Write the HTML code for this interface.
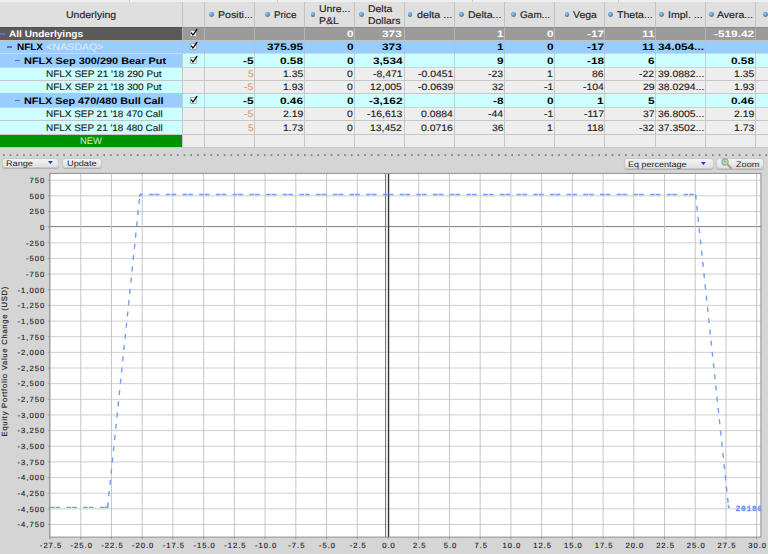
<!DOCTYPE html><html><head><meta charset="utf-8"><style>
*{margin:0;padding:0;box-sizing:border-box}
html,body{width:768px;height:554px;overflow:hidden;background:#d5d5d5;font-family:'Liberation Sans', sans-serif;text-rendering:geometricPrecision}
.a{position:absolute}
</style></head><body>
<div class="a" style="left:0;top:0;width:768px;height:2px;background:#efefef"></div>
<div class="a" style="left:0;top:2px;width:768px;height:25px;background:#dfdfdf"></div>
<div class="a" style="left:129.1px;top:0;width:0.8px;height:2px;background:#c8c8c8"></div>
<div class="a" style="left:277.1px;top:0;width:0.8px;height:2px;background:#c8c8c8"></div>
<div class="a" style="left:471.6px;top:0;width:0.8px;height:2px;background:#c8c8c8"></div>
<div class="a" style="left:618.1px;top:0;width:0.8px;height:2px;background:#c8c8c8"></div>
<div class="a" style="left:182.00px;top:2px;width:1px;height:25px;background:#c2c2c2"></div>
<div class="a" style="left:204.00px;top:2px;width:1px;height:25px;background:#c2c2c2"></div>
<div class="a" style="left:254.10px;top:2px;width:1px;height:25px;background:#c2c2c2"></div>
<div class="a" style="left:304.10px;top:2px;width:1px;height:25px;background:#c2c2c2"></div>
<div class="a" style="left:353.90px;top:2px;width:1px;height:25px;background:#c2c2c2"></div>
<div class="a" style="left:404.00px;top:2px;width:1px;height:25px;background:#c2c2c2"></div>
<div class="a" style="left:454.00px;top:2px;width:1px;height:25px;background:#c2c2c2"></div>
<div class="a" style="left:504.00px;top:2px;width:1px;height:25px;background:#c2c2c2"></div>
<div class="a" style="left:554.10px;top:2px;width:1px;height:25px;background:#c2c2c2"></div>
<div class="a" style="left:604.00px;top:2px;width:1px;height:25px;background:#c2c2c2"></div>
<div class="a" style="left:654.90px;top:2px;width:1px;height:25px;background:#c2c2c2"></div>
<div class="a" style="left:704.90px;top:2px;width:1px;height:25px;background:#c2c2c2"></div>
<div class="a" style="left:754.90px;top:2px;width:1px;height:25px;background:#c2c2c2"></div>
<div class="a" style="left:804.90px;top:2px;width:1px;height:25px;background:#c2c2c2"></div>
<div style="position:absolute;top:10.00px;white-space:pre;font-family:'Liberation Sans', sans-serif;font-size:9.7px;line-height:11.64px;color:#222;-webkit-text-stroke:0.15px #222;left:66.20px;width:48.31px;transform-origin:0 0;transform:scaleX(1.0839);">Underlying</div>
<div class="a" style="left:209.30px;top:11.90px;width:4.8px;height:4.8px;border-radius:50%;background:radial-gradient(circle at 40% 35%,#9ccaf0,#2f6db0 80%)"></div>
<div style="position:absolute;top:10.00px;white-space:pre;font-family:'Liberation Sans', sans-serif;font-size:9.7px;line-height:11.64px;color:#222;-webkit-text-stroke:0.15px #222;left:217.60px;width:33.77px;transform-origin:0 0;transform:scaleX(1.0955);">Positi...</div>
<div class="a" style="left:265.10px;top:11.90px;width:4.8px;height:4.8px;border-radius:50%;background:radial-gradient(circle at 40% 35%,#9ccaf0,#2f6db0 80%)"></div>
<div style="position:absolute;top:10.00px;white-space:pre;font-family:'Liberation Sans', sans-serif;font-size:9.7px;line-height:11.64px;color:#222;-webkit-text-stroke:0.15px #222;left:273.80px;width:24.08px;transform-origin:0 0;transform:scaleX(1.0191);">Price</div>
<div class="a" style="left:310.60px;top:11.90px;width:4.8px;height:4.8px;border-radius:50%;background:radial-gradient(circle at 40% 35%,#9ccaf0,#2f6db0 80%)"></div>
<div style="position:absolute;top:4.00px;white-space:pre;font-family:'Liberation Sans', sans-serif;font-size:9.7px;line-height:11.64px;color:#222;-webkit-text-stroke:0.15px #222;left:319.00px;width:31.08px;transform-origin:0 0;transform:scaleX(1.0798);">Unre...</div>
<div style="position:absolute;top:16.00px;white-space:pre;font-family:'Liberation Sans', sans-serif;font-size:9.7px;line-height:11.64px;color:#222;-webkit-text-stroke:0.15px #222;left:319.00px;width:20.31px;transform-origin:0 0;transform:scaleX(1.0800);">P&amp;L</div>
<div class="a" style="left:359.30px;top:11.90px;width:4.8px;height:4.8px;border-radius:50%;background:radial-gradient(circle at 40% 35%,#9ccaf0,#2f6db0 80%)"></div>
<div style="position:absolute;top:4.00px;white-space:pre;font-family:'Liberation Sans', sans-serif;font-size:9.7px;line-height:11.64px;color:#222;-webkit-text-stroke:0.15px #222;left:368.20px;width:24.62px;transform-origin:0 0;transform:scaleX(1.0800);">Delta</div>
<div style="position:absolute;top:16.00px;white-space:pre;font-family:'Liberation Sans', sans-serif;font-size:9.7px;line-height:11.64px;color:#222;-webkit-text-stroke:0.15px #222;left:368.20px;width:32.16px;transform-origin:0 0;transform:scaleX(1.0800);">Dollars</div>
<div class="a" style="left:407.60px;top:11.90px;width:4.8px;height:4.8px;border-radius:50%;background:radial-gradient(circle at 40% 35%,#9ccaf0,#2f6db0 80%)"></div>
<div style="position:absolute;top:10.00px;white-space:pre;font-family:'Liberation Sans', sans-serif;font-size:9.7px;line-height:11.64px;color:#222;-webkit-text-stroke:0.15px #222;left:417.00px;width:33.78px;transform-origin:0 0;transform:scaleX(1.1107);">delta ...</div>
<div class="a" style="left:458.90px;top:11.90px;width:4.8px;height:4.8px;border-radius:50%;background:radial-gradient(circle at 40% 35%,#9ccaf0,#2f6db0 80%)"></div>
<div style="position:absolute;top:10.00px;white-space:pre;font-family:'Liberation Sans', sans-serif;font-size:9.7px;line-height:11.64px;color:#222;-webkit-text-stroke:0.15px #222;left:467.50px;width:32.70px;transform-origin:0 0;transform:scaleX(1.0878);">Delta...</div>
<div class="a" style="left:511.10px;top:11.90px;width:4.8px;height:4.8px;border-radius:50%;background:radial-gradient(circle at 40% 35%,#9ccaf0,#2f6db0 80%)"></div>
<div style="position:absolute;top:10.00px;white-space:pre;font-family:'Liberation Sans', sans-serif;font-size:9.7px;line-height:11.64px;color:#222;-webkit-text-stroke:0.15px #222;left:519.80px;width:31.08px;transform-origin:0 0;transform:scaleX(1.0351);">Gam...</div>
<div class="a" style="left:564.60px;top:11.90px;width:4.8px;height:4.8px;border-radius:50%;background:radial-gradient(circle at 40% 35%,#9ccaf0,#2f6db0 80%)"></div>
<div style="position:absolute;top:10.00px;white-space:pre;font-family:'Liberation Sans', sans-serif;font-size:9.7px;line-height:11.64px;color:#222;-webkit-text-stroke:0.15px #222;left:573.20px;width:24.09px;transform-origin:0 0;transform:scaleX(1.0818);">Vega</div>
<div class="a" style="left:608.30px;top:11.90px;width:4.8px;height:4.8px;border-radius:50%;background:radial-gradient(circle at 40% 35%,#9ccaf0,#2f6db0 80%)"></div>
<div style="position:absolute;top:10.00px;white-space:pre;font-family:'Liberation Sans', sans-serif;font-size:9.7px;line-height:11.64px;color:#222;-webkit-text-stroke:0.15px #222;left:616.80px;width:34.86px;transform-origin:0 0;transform:scaleX(1.0895);">Theta...</div>
<div class="a" style="left:658.80px;top:11.90px;width:4.8px;height:4.8px;border-radius:50%;background:radial-gradient(circle at 40% 35%,#9ccaf0,#2f6db0 80%)"></div>
<div style="position:absolute;top:10.00px;white-space:pre;font-family:'Liberation Sans', sans-serif;font-size:9.7px;line-height:11.64px;color:#222;-webkit-text-stroke:0.15px #222;left:668.00px;width:33.77px;transform-origin:0 0;transform:scaleX(1.0892);">Impl. ...</div>
<div class="a" style="left:708.80px;top:11.90px;width:4.8px;height:4.8px;border-radius:50%;background:radial-gradient(circle at 40% 35%,#9ccaf0,#2f6db0 80%)"></div>
<div style="position:absolute;top:10.00px;white-space:pre;font-family:'Liberation Sans', sans-serif;font-size:9.7px;line-height:11.64px;color:#222;-webkit-text-stroke:0.15px #222;left:717.40px;width:35.22px;transform-origin:0 0;transform:scaleX(1.0837);">Avera...</div>
<div class="a" style="left:763.30px;top:11.90px;width:4.8px;height:4.8px;border-radius:50%;background:radial-gradient(circle at 40% 35%,#9ccaf0,#2f6db0 80%)"></div>
<div class="a" style="left:0;top:27.000px;width:182.5px;height:13.360px;background:#5a5a5a"></div>
<div class="a" style="left:182.5px;top:27.000px;width:585.5px;height:13.360px;background:#9b9b9b"></div>
<div class="a" style="left:0;top:40.360px;width:182.5px;height:13.360px;background:#99ccff"></div>
<div class="a" style="left:182.5px;top:40.360px;width:585.5px;height:13.360px;background:#99ccff"></div>
<div class="a" style="left:0;top:53.720px;width:182.5px;height:13.360px;background:#99ccff"></div>
<div class="a" style="left:182.5px;top:53.720px;width:585.5px;height:13.360px;background:#ccffff"></div>
<div class="a" style="left:0;top:67.080px;width:182.5px;height:13.360px;background:#ccffff"></div>
<div class="a" style="left:182.5px;top:67.080px;width:585.5px;height:13.360px;background:#eeeeee"></div>
<div class="a" style="left:0;top:80.440px;width:182.5px;height:13.360px;background:#ccffff"></div>
<div class="a" style="left:182.5px;top:80.440px;width:585.5px;height:13.360px;background:#eeeeee"></div>
<div class="a" style="left:0;top:93.800px;width:182.5px;height:13.360px;background:#99ccff"></div>
<div class="a" style="left:182.5px;top:93.800px;width:585.5px;height:13.360px;background:#ccffff"></div>
<div class="a" style="left:0;top:107.160px;width:182.5px;height:13.360px;background:#ccffff"></div>
<div class="a" style="left:182.5px;top:107.160px;width:585.5px;height:13.360px;background:#eeeeee"></div>
<div class="a" style="left:0;top:120.520px;width:182.5px;height:13.360px;background:#ccffff"></div>
<div class="a" style="left:182.5px;top:120.520px;width:585.5px;height:13.360px;background:#eeeeee"></div>
<div class="a" style="left:0;top:133.880px;width:182.5px;height:13.360px;background:#009300"></div>
<div class="a" style="left:182.5px;top:133.880px;width:585.5px;height:13.360px;background:#eeeeee"></div>
<div class="a" style="left:0;top:40.010px;width:768px;height:1px;background:#c4c4c4"></div>
<div class="a" style="left:182.00px;top:27.000px;width:1px;height:13.360px;background:#b4b4b4"></div>
<div class="a" style="left:204.00px;top:27.000px;width:1px;height:13.360px;background:#b4b4b4"></div>
<div class="a" style="left:254.10px;top:27.000px;width:1px;height:13.360px;background:#b4b4b4"></div>
<div class="a" style="left:304.10px;top:27.000px;width:1px;height:13.360px;background:#b4b4b4"></div>
<div class="a" style="left:353.90px;top:27.000px;width:1px;height:13.360px;background:#b4b4b4"></div>
<div class="a" style="left:404.00px;top:27.000px;width:1px;height:13.360px;background:#b4b4b4"></div>
<div class="a" style="left:454.00px;top:27.000px;width:1px;height:13.360px;background:#b4b4b4"></div>
<div class="a" style="left:504.00px;top:27.000px;width:1px;height:13.360px;background:#b4b4b4"></div>
<div class="a" style="left:554.10px;top:27.000px;width:1px;height:13.360px;background:#b4b4b4"></div>
<div class="a" style="left:604.00px;top:27.000px;width:1px;height:13.360px;background:#b4b4b4"></div>
<div class="a" style="left:654.90px;top:27.000px;width:1px;height:13.360px;background:#b4b4b4"></div>
<div class="a" style="left:704.90px;top:27.000px;width:1px;height:13.360px;background:#b4b4b4"></div>
<div class="a" style="left:754.90px;top:27.000px;width:1px;height:13.360px;background:#b4b4b4"></div>
<div class="a" style="left:804.90px;top:27.000px;width:1px;height:13.360px;background:#b4b4b4"></div>
<div class="a" style="left:0;top:27.000px;width:768px;height:0.9px;background:rgba(0,0,0,0.1)"></div>
<div class="a" style="left:0px;top:33.050px;width:5.4px;height:1.6px;background:#6868d4"></div>
<div style="position:absolute;top:29.00px;white-space:pre;font-family:'Liberation Sans', sans-serif;font-size:9.3px;line-height:11.16px;color:#ffffff;font-weight:bold;left:9.00px;width:70.20px;transform-origin:0 0;transform:scaleX(1.0865);">All Underlyings</div>
<svg class="a" style="left:185px;top:27.000px" width="16" height="13" viewBox="0 0 16 13"><rect x="5.25" y="3.75" width="5.9" height="5.7" fill="#fff" stroke="#8c8c8c" stroke-width="0.7"/><path d="M6.4 5.9 L8.0 8.1 L11.9 2.3" fill="none" stroke="#000" stroke-width="1.25" stroke-linecap="round" stroke-linejoin="round"/></svg>
<div style="position:absolute;top:29.00px;white-space:pre;font-family:'Liberation Sans', sans-serif;font-size:9.3px;line-height:11.16px;color:#ffffff;font-weight:bold;left:346.53px;width:7.17px;transform-origin:0 0;transform:scaleX(1.2700);">0</div>
<div style="position:absolute;top:29.00px;white-space:pre;font-family:'Liberation Sans', sans-serif;font-size:9.3px;line-height:11.16px;color:#ffffff;font-weight:bold;left:382.40px;width:17.52px;transform-origin:0 0;transform:scaleX(1.2700);">373</div>
<div style="position:absolute;top:29.00px;white-space:pre;font-family:'Liberation Sans', sans-serif;font-size:9.3px;line-height:11.16px;color:#ffffff;font-weight:bold;left:496.83px;width:7.17px;transform-origin:0 0;transform:scaleX(1.2700);">1</div>
<div style="position:absolute;top:29.00px;white-space:pre;font-family:'Liberation Sans', sans-serif;font-size:9.3px;line-height:11.16px;color:#ffffff;font-weight:bold;left:546.53px;width:7.17px;transform-origin:0 0;transform:scaleX(1.2700);">0</div>
<div style="position:absolute;top:29.00px;white-space:pre;font-family:'Liberation Sans', sans-serif;font-size:9.3px;line-height:11.16px;color:#ffffff;font-weight:bold;left:586.53px;width:15.44px;transform-origin:0 0;transform:scaleX(1.2700);">-17</div>
<div style="position:absolute;top:29.00px;white-space:pre;font-family:'Liberation Sans', sans-serif;font-size:9.3px;line-height:11.16px;color:#ffffff;font-weight:bold;left:641.62px;width:11.83px;transform-origin:0 0;transform:scaleX(1.2700);">11</div>
<div style="position:absolute;top:29.00px;white-space:pre;font-family:'Liberation Sans', sans-serif;font-size:9.3px;line-height:11.16px;color:#ffffff;font-weight:bold;left:714.24px;width:33.55px;transform-origin:0 0;transform:scaleX(1.2700);">-519.42</div>
<div class="a" style="left:0;top:53.370px;width:768px;height:1px;background:#c4dcf0"></div>
<div class="a" style="left:182.00px;top:40.360px;width:1px;height:13.360px;background:#a8c4e0"></div>
<div class="a" style="left:204.00px;top:40.360px;width:1px;height:13.360px;background:#a8c4e0"></div>
<div class="a" style="left:254.10px;top:40.360px;width:1px;height:13.360px;background:#a8c4e0"></div>
<div class="a" style="left:304.10px;top:40.360px;width:1px;height:13.360px;background:#a8c4e0"></div>
<div class="a" style="left:353.90px;top:40.360px;width:1px;height:13.360px;background:#a8c4e0"></div>
<div class="a" style="left:404.00px;top:40.360px;width:1px;height:13.360px;background:#a8c4e0"></div>
<div class="a" style="left:454.00px;top:40.360px;width:1px;height:13.360px;background:#a8c4e0"></div>
<div class="a" style="left:504.00px;top:40.360px;width:1px;height:13.360px;background:#a8c4e0"></div>
<div class="a" style="left:554.10px;top:40.360px;width:1px;height:13.360px;background:#a8c4e0"></div>
<div class="a" style="left:604.00px;top:40.360px;width:1px;height:13.360px;background:#a8c4e0"></div>
<div class="a" style="left:654.90px;top:40.360px;width:1px;height:13.360px;background:#a8c4e0"></div>
<div class="a" style="left:704.90px;top:40.360px;width:1px;height:13.360px;background:#a8c4e0"></div>
<div class="a" style="left:754.90px;top:40.360px;width:1px;height:13.360px;background:#a8c4e0"></div>
<div class="a" style="left:804.90px;top:40.360px;width:1px;height:13.360px;background:#a8c4e0"></div>
<div class="a" style="left:7px;top:46.410px;width:5.4px;height:1.6px;background:#6868d4"></div>
<div style="position:absolute;top:42.00px;white-space:pre;font-family:'Liberation Sans', sans-serif;font-size:9.3px;line-height:11.16px;color:#000;font-weight:bold;left:16.80px;width:26.28px;transform-origin:0 0;transform:scaleX(1.0708);">NFLX</div>
<div style="position:absolute;top:42.00px;white-space:pre;font-family:'Liberation Sans', sans-serif;font-size:9.3px;line-height:11.16px;color:#dce8f6;-webkit-text-stroke:0.15px #dce8f6;left:46.10px;width:52.12px;transform-origin:0 0;transform:scaleX(1.1471);">&lt;NASDAQ&gt;</div>
<svg class="a" style="left:185px;top:40.360px" width="16" height="13" viewBox="0 0 16 13"><rect x="5.25" y="3.75" width="5.9" height="5.7" fill="#fff" stroke="#8c8c8c" stroke-width="0.7"/><path d="M6.4 5.9 L8.0 8.1 L11.9 2.3" fill="none" stroke="#000" stroke-width="1.25" stroke-linecap="round" stroke-linejoin="round"/></svg>
<div style="position:absolute;top:42.00px;white-space:pre;font-family:'Liberation Sans', sans-serif;font-size:9.3px;line-height:11.16px;color:#000;font-weight:bold;left:266.78px;width:30.44px;transform-origin:0 0;transform:scaleX(1.2700);">375.95</div>
<div style="position:absolute;top:42.00px;white-space:pre;font-family:'Liberation Sans', sans-serif;font-size:9.3px;line-height:11.16px;color:#000;font-weight:bold;left:346.53px;width:7.17px;transform-origin:0 0;transform:scaleX(1.2700);">0</div>
<div style="position:absolute;top:42.00px;white-space:pre;font-family:'Liberation Sans', sans-serif;font-size:9.3px;line-height:11.16px;color:#000;font-weight:bold;left:382.40px;width:17.52px;transform-origin:0 0;transform:scaleX(1.2700);">373</div>
<div style="position:absolute;top:42.00px;white-space:pre;font-family:'Liberation Sans', sans-serif;font-size:9.3px;line-height:11.16px;color:#000;font-weight:bold;left:496.83px;width:7.17px;transform-origin:0 0;transform:scaleX(1.2700);">1</div>
<div style="position:absolute;top:42.00px;white-space:pre;font-family:'Liberation Sans', sans-serif;font-size:9.3px;line-height:11.16px;color:#000;font-weight:bold;left:546.53px;width:7.17px;transform-origin:0 0;transform:scaleX(1.2700);">0</div>
<div style="position:absolute;top:42.00px;white-space:pre;font-family:'Liberation Sans', sans-serif;font-size:9.3px;line-height:11.16px;color:#000;font-weight:bold;left:586.53px;width:15.44px;transform-origin:0 0;transform:scaleX(1.2700);">-17</div>
<div style="position:absolute;top:42.00px;white-space:pre;font-family:'Liberation Sans', sans-serif;font-size:9.3px;line-height:11.16px;color:#000;font-weight:bold;left:641.62px;width:11.83px;transform-origin:0 0;transform:scaleX(1.2700);">11</div>
<div style="position:absolute;top:42.00px;white-space:pre;font-family:'Liberation Sans', sans-serif;font-size:9.3px;line-height:11.16px;color:#000;font-weight:bold;left:658.14px;width:38.19px;transform-origin:0 0;transform:scaleX(1.2700);">34.054...</div>
<div class="a" style="left:0;top:66.730px;width:768px;height:1px;background:#c4d8d8"></div>
<div class="a" style="left:182.00px;top:53.720px;width:1px;height:13.360px;background:#bcd4d4"></div>
<div class="a" style="left:204.00px;top:53.720px;width:1px;height:13.360px;background:#bcd4d4"></div>
<div class="a" style="left:254.10px;top:53.720px;width:1px;height:13.360px;background:#bcd4d4"></div>
<div class="a" style="left:304.10px;top:53.720px;width:1px;height:13.360px;background:#bcd4d4"></div>
<div class="a" style="left:353.90px;top:53.720px;width:1px;height:13.360px;background:#bcd4d4"></div>
<div class="a" style="left:404.00px;top:53.720px;width:1px;height:13.360px;background:#bcd4d4"></div>
<div class="a" style="left:454.00px;top:53.720px;width:1px;height:13.360px;background:#bcd4d4"></div>
<div class="a" style="left:504.00px;top:53.720px;width:1px;height:13.360px;background:#bcd4d4"></div>
<div class="a" style="left:554.10px;top:53.720px;width:1px;height:13.360px;background:#bcd4d4"></div>
<div class="a" style="left:604.00px;top:53.720px;width:1px;height:13.360px;background:#bcd4d4"></div>
<div class="a" style="left:654.90px;top:53.720px;width:1px;height:13.360px;background:#bcd4d4"></div>
<div class="a" style="left:704.90px;top:53.720px;width:1px;height:13.360px;background:#bcd4d4"></div>
<div class="a" style="left:754.90px;top:53.720px;width:1px;height:13.360px;background:#bcd4d4"></div>
<div class="a" style="left:804.90px;top:53.720px;width:1px;height:13.360px;background:#bcd4d4"></div>
<div class="a" style="left:15px;top:59.770px;width:5.4px;height:1.6px;background:#6868d4"></div>
<div style="position:absolute;top:56.00px;white-space:pre;font-family:'Liberation Sans', sans-serif;font-size:9.3px;line-height:11.16px;color:#000;font-weight:bold;left:24.10px;width:122.92px;transform-origin:0 0;transform:scaleX(1.1751);">NFLX Sep 300/290 Bear Put</div>
<svg class="a" style="left:185px;top:53.720px" width="16" height="13" viewBox="0 0 16 13"><rect x="5.25" y="3.75" width="5.9" height="5.7" fill="#fff" stroke="#8c8c8c" stroke-width="0.7"/><path d="M6.4 5.9 L8.0 8.1 L11.9 2.3" fill="none" stroke="#000" stroke-width="1.25" stroke-linecap="round" stroke-linejoin="round"/></svg>
<div style="position:absolute;top:56.00px;white-space:pre;font-family:'Liberation Sans', sans-serif;font-size:9.3px;line-height:11.16px;color:#000;font-weight:bold;left:242.88px;width:10.28px;transform-origin:0 0;transform:scaleX(1.2700);">-5</div>
<div style="position:absolute;top:56.00px;white-space:pre;font-family:'Liberation Sans', sans-serif;font-size:9.3px;line-height:11.16px;color:#000;font-weight:bold;left:279.90px;width:20.11px;transform-origin:0 0;transform:scaleX(1.2700);">0.58</div>
<div style="position:absolute;top:56.00px;white-space:pre;font-family:'Liberation Sans', sans-serif;font-size:9.3px;line-height:11.16px;color:#000;font-weight:bold;left:346.53px;width:7.17px;transform-origin:0 0;transform:scaleX(1.2700);">0</div>
<div style="position:absolute;top:56.00px;white-space:pre;font-family:'Liberation Sans', sans-serif;font-size:9.3px;line-height:11.16px;color:#000;font-weight:bold;left:372.55px;width:25.27px;transform-origin:0 0;transform:scaleX(1.2700);">3,534</div>
<div style="position:absolute;top:56.00px;white-space:pre;font-family:'Liberation Sans', sans-serif;font-size:9.3px;line-height:11.16px;color:#000;font-weight:bold;left:496.83px;width:7.17px;transform-origin:0 0;transform:scaleX(1.2700);">9</div>
<div style="position:absolute;top:56.00px;white-space:pre;font-family:'Liberation Sans', sans-serif;font-size:9.3px;line-height:11.16px;color:#000;font-weight:bold;left:546.53px;width:7.17px;transform-origin:0 0;transform:scaleX(1.2700);">0</div>
<div style="position:absolute;top:56.00px;white-space:pre;font-family:'Liberation Sans', sans-serif;font-size:9.3px;line-height:11.16px;color:#000;font-weight:bold;left:586.53px;width:15.44px;transform-origin:0 0;transform:scaleX(1.2700);">-18</div>
<div style="position:absolute;top:56.00px;white-space:pre;font-family:'Liberation Sans', sans-serif;font-size:9.3px;line-height:11.16px;color:#000;font-weight:bold;left:647.53px;width:7.17px;transform-origin:0 0;transform:scaleX(1.2700);">6</div>
<div style="position:absolute;top:56.00px;white-space:pre;font-family:'Liberation Sans', sans-serif;font-size:9.3px;line-height:11.16px;color:#000;font-weight:bold;left:731.30px;width:20.11px;transform-origin:0 0;transform:scaleX(1.2700);">0.58</div>
<div class="a" style="left:0;top:80.090px;width:768px;height:1px;background:#c6c6c6"></div>
<div class="a" style="left:182.00px;top:67.080px;width:1px;height:13.360px;background:#c6c6c6"></div>
<div class="a" style="left:204.00px;top:67.080px;width:1px;height:13.360px;background:#c6c6c6"></div>
<div class="a" style="left:254.10px;top:67.080px;width:1px;height:13.360px;background:#c6c6c6"></div>
<div class="a" style="left:304.10px;top:67.080px;width:1px;height:13.360px;background:#c6c6c6"></div>
<div class="a" style="left:353.90px;top:67.080px;width:1px;height:13.360px;background:#c6c6c6"></div>
<div class="a" style="left:404.00px;top:67.080px;width:1px;height:13.360px;background:#c6c6c6"></div>
<div class="a" style="left:454.00px;top:67.080px;width:1px;height:13.360px;background:#c6c6c6"></div>
<div class="a" style="left:504.00px;top:67.080px;width:1px;height:13.360px;background:#c6c6c6"></div>
<div class="a" style="left:554.10px;top:67.080px;width:1px;height:13.360px;background:#c6c6c6"></div>
<div class="a" style="left:604.00px;top:67.080px;width:1px;height:13.360px;background:#c6c6c6"></div>
<div class="a" style="left:654.90px;top:67.080px;width:1px;height:13.360px;background:#c6c6c6"></div>
<div class="a" style="left:704.90px;top:67.080px;width:1px;height:13.360px;background:#c6c6c6"></div>
<div class="a" style="left:754.90px;top:67.080px;width:1px;height:13.360px;background:#c6c6c6"></div>
<div class="a" style="left:804.90px;top:67.080px;width:1px;height:13.360px;background:#c6c6c6"></div>
<div style="position:absolute;top:69.00px;white-space:pre;font-family:'Liberation Sans', sans-serif;font-size:9.3px;line-height:11.16px;color:#1e1e1e;-webkit-text-stroke:0.15px #1e1e1e;left:46.20px;width:109.05px;transform-origin:0 0;transform:scaleX(1.0790);">NFLX SEP 21 &#x27;18 290 Put</div>
<div style="position:absolute;top:69.00px;white-space:pre;font-family:'Liberation Sans', sans-serif;font-size:9.3px;line-height:11.16px;color:#e59a68;-webkit-text-stroke:0.15px #e59a68;left:247.61px;width:7.17px;transform-origin:0 0;transform:scaleX(1.1200);">5</div>
<div style="position:absolute;top:69.00px;white-space:pre;font-family:'Liberation Sans', sans-serif;font-size:9.3px;line-height:11.16px;color:#1e1e1e;-webkit-text-stroke:0.15px #1e1e1e;left:282.62px;width:20.11px;transform-origin:0 0;transform:scaleX(1.1200);">1.35</div>
<div style="position:absolute;top:69.00px;white-space:pre;font-family:'Liberation Sans', sans-serif;font-size:9.3px;line-height:11.16px;color:#1e1e1e;-webkit-text-stroke:0.15px #1e1e1e;left:347.31px;width:7.17px;transform-origin:0 0;transform:scaleX(1.1200);">0</div>
<div style="position:absolute;top:69.00px;white-space:pre;font-family:'Liberation Sans', sans-serif;font-size:9.3px;line-height:11.16px;color:#1e1e1e;-webkit-text-stroke:0.15px #1e1e1e;left:372.56px;width:28.38px;transform-origin:0 0;transform:scaleX(1.1200);">-8,471</div>
<div style="position:absolute;top:69.00px;white-space:pre;font-family:'Liberation Sans', sans-serif;font-size:9.3px;line-height:11.16px;color:#1e1e1e;-webkit-text-stroke:0.15px #1e1e1e;left:417.77px;width:33.55px;transform-origin:0 0;transform:scaleX(1.1200);">-0.0451</div>
<div style="position:absolute;top:69.00px;white-space:pre;font-family:'Liberation Sans', sans-serif;font-size:9.3px;line-height:11.16px;color:#1e1e1e;-webkit-text-stroke:0.15px #1e1e1e;left:488.35px;width:15.44px;transform-origin:0 0;transform:scaleX(1.1200);">-23</div>
<div style="position:absolute;top:69.00px;white-space:pre;font-family:'Liberation Sans', sans-serif;font-size:9.3px;line-height:11.16px;color:#1e1e1e;-webkit-text-stroke:0.15px #1e1e1e;left:547.31px;width:7.17px;transform-origin:0 0;transform:scaleX(1.1200);">1</div>
<div style="position:absolute;top:69.00px;white-space:pre;font-family:'Liberation Sans', sans-serif;font-size:9.3px;line-height:11.16px;color:#1e1e1e;-webkit-text-stroke:0.15px #1e1e1e;left:592.01px;width:12.34px;transform-origin:0 0;transform:scaleX(1.1200);">86</div>
<div style="position:absolute;top:69.00px;white-space:pre;font-family:'Liberation Sans', sans-serif;font-size:9.3px;line-height:11.16px;color:#1e1e1e;-webkit-text-stroke:0.15px #1e1e1e;left:639.05px;width:15.44px;transform-origin:0 0;transform:scaleX(1.1200);">-22</div>
<div style="position:absolute;top:69.00px;white-space:pre;font-family:'Liberation Sans', sans-serif;font-size:9.3px;line-height:11.16px;color:#1e1e1e;-webkit-text-stroke:0.15px #1e1e1e;left:657.78px;width:43.36px;transform-origin:0 0;transform:scaleX(1.1200);">39.0882...</div>
<div style="position:absolute;top:69.00px;white-space:pre;font-family:'Liberation Sans', sans-serif;font-size:9.3px;line-height:11.16px;color:#1e1e1e;-webkit-text-stroke:0.15px #1e1e1e;left:734.02px;width:20.11px;transform-origin:0 0;transform:scaleX(1.1200);">1.35</div>
<div class="a" style="left:0;top:93.450px;width:768px;height:1px;background:#c6c6c6"></div>
<div class="a" style="left:182.00px;top:80.440px;width:1px;height:13.360px;background:#c6c6c6"></div>
<div class="a" style="left:204.00px;top:80.440px;width:1px;height:13.360px;background:#c6c6c6"></div>
<div class="a" style="left:254.10px;top:80.440px;width:1px;height:13.360px;background:#c6c6c6"></div>
<div class="a" style="left:304.10px;top:80.440px;width:1px;height:13.360px;background:#c6c6c6"></div>
<div class="a" style="left:353.90px;top:80.440px;width:1px;height:13.360px;background:#c6c6c6"></div>
<div class="a" style="left:404.00px;top:80.440px;width:1px;height:13.360px;background:#c6c6c6"></div>
<div class="a" style="left:454.00px;top:80.440px;width:1px;height:13.360px;background:#c6c6c6"></div>
<div class="a" style="left:504.00px;top:80.440px;width:1px;height:13.360px;background:#c6c6c6"></div>
<div class="a" style="left:554.10px;top:80.440px;width:1px;height:13.360px;background:#c6c6c6"></div>
<div class="a" style="left:604.00px;top:80.440px;width:1px;height:13.360px;background:#c6c6c6"></div>
<div class="a" style="left:654.90px;top:80.440px;width:1px;height:13.360px;background:#c6c6c6"></div>
<div class="a" style="left:704.90px;top:80.440px;width:1px;height:13.360px;background:#c6c6c6"></div>
<div class="a" style="left:754.90px;top:80.440px;width:1px;height:13.360px;background:#c6c6c6"></div>
<div class="a" style="left:804.90px;top:80.440px;width:1px;height:13.360px;background:#c6c6c6"></div>
<div style="position:absolute;top:82.00px;white-space:pre;font-family:'Liberation Sans', sans-serif;font-size:9.3px;line-height:11.16px;color:#1e1e1e;-webkit-text-stroke:0.15px #1e1e1e;left:46.20px;width:109.05px;transform-origin:0 0;transform:scaleX(1.0790);">NFLX SEP 21 &#x27;18 300 Put</div>
<div style="position:absolute;top:82.00px;white-space:pre;font-family:'Liberation Sans', sans-serif;font-size:9.3px;line-height:11.16px;color:#e59a68;-webkit-text-stroke:0.15px #e59a68;left:244.12px;width:10.28px;transform-origin:0 0;transform:scaleX(1.1200);">-5</div>
<div style="position:absolute;top:82.00px;white-space:pre;font-family:'Liberation Sans', sans-serif;font-size:9.3px;line-height:11.16px;color:#1e1e1e;-webkit-text-stroke:0.15px #1e1e1e;left:282.62px;width:20.11px;transform-origin:0 0;transform:scaleX(1.1200);">1.93</div>
<div style="position:absolute;top:82.00px;white-space:pre;font-family:'Liberation Sans', sans-serif;font-size:9.3px;line-height:11.16px;color:#1e1e1e;-webkit-text-stroke:0.15px #1e1e1e;left:347.31px;width:7.17px;transform-origin:0 0;transform:scaleX(1.1200);">0</div>
<div style="position:absolute;top:82.00px;white-space:pre;font-family:'Liberation Sans', sans-serif;font-size:9.3px;line-height:11.16px;color:#1e1e1e;-webkit-text-stroke:0.15px #1e1e1e;left:370.25px;width:30.44px;transform-origin:0 0;transform:scaleX(1.1200);">12,005</div>
<div style="position:absolute;top:82.00px;white-space:pre;font-family:'Liberation Sans', sans-serif;font-size:9.3px;line-height:11.16px;color:#1e1e1e;-webkit-text-stroke:0.15px #1e1e1e;left:417.77px;width:33.55px;transform-origin:0 0;transform:scaleX(1.1200);">-0.0639</div>
<div style="position:absolute;top:82.00px;white-space:pre;font-family:'Liberation Sans', sans-serif;font-size:9.3px;line-height:11.16px;color:#1e1e1e;-webkit-text-stroke:0.15px #1e1e1e;left:491.81px;width:12.34px;transform-origin:0 0;transform:scaleX(1.1200);">32</div>
<div style="position:absolute;top:82.00px;white-space:pre;font-family:'Liberation Sans', sans-serif;font-size:9.3px;line-height:11.16px;color:#1e1e1e;-webkit-text-stroke:0.15px #1e1e1e;left:543.83px;width:10.28px;transform-origin:0 0;transform:scaleX(1.1200);">-1</div>
<div style="position:absolute;top:82.00px;white-space:pre;font-family:'Liberation Sans', sans-serif;font-size:9.3px;line-height:11.16px;color:#1e1e1e;-webkit-text-stroke:0.15px #1e1e1e;left:582.76px;width:20.61px;transform-origin:0 0;transform:scaleX(1.1200);">-104</div>
<div style="position:absolute;top:82.00px;white-space:pre;font-family:'Liberation Sans', sans-serif;font-size:9.3px;line-height:11.16px;color:#1e1e1e;-webkit-text-stroke:0.15px #1e1e1e;left:642.51px;width:12.34px;transform-origin:0 0;transform:scaleX(1.1200);">29</div>
<div style="position:absolute;top:82.00px;white-space:pre;font-family:'Liberation Sans', sans-serif;font-size:9.3px;line-height:11.16px;color:#1e1e1e;-webkit-text-stroke:0.15px #1e1e1e;left:657.78px;width:43.36px;transform-origin:0 0;transform:scaleX(1.1200);">38.0294...</div>
<div style="position:absolute;top:82.00px;white-space:pre;font-family:'Liberation Sans', sans-serif;font-size:9.3px;line-height:11.16px;color:#1e1e1e;-webkit-text-stroke:0.15px #1e1e1e;left:734.02px;width:20.11px;transform-origin:0 0;transform:scaleX(1.1200);">1.93</div>
<div class="a" style="left:0;top:106.810px;width:768px;height:1px;background:#c4d8d8"></div>
<div class="a" style="left:182.00px;top:93.800px;width:1px;height:13.360px;background:#bcd4d4"></div>
<div class="a" style="left:204.00px;top:93.800px;width:1px;height:13.360px;background:#bcd4d4"></div>
<div class="a" style="left:254.10px;top:93.800px;width:1px;height:13.360px;background:#bcd4d4"></div>
<div class="a" style="left:304.10px;top:93.800px;width:1px;height:13.360px;background:#bcd4d4"></div>
<div class="a" style="left:353.90px;top:93.800px;width:1px;height:13.360px;background:#bcd4d4"></div>
<div class="a" style="left:404.00px;top:93.800px;width:1px;height:13.360px;background:#bcd4d4"></div>
<div class="a" style="left:454.00px;top:93.800px;width:1px;height:13.360px;background:#bcd4d4"></div>
<div class="a" style="left:504.00px;top:93.800px;width:1px;height:13.360px;background:#bcd4d4"></div>
<div class="a" style="left:554.10px;top:93.800px;width:1px;height:13.360px;background:#bcd4d4"></div>
<div class="a" style="left:604.00px;top:93.800px;width:1px;height:13.360px;background:#bcd4d4"></div>
<div class="a" style="left:654.90px;top:93.800px;width:1px;height:13.360px;background:#bcd4d4"></div>
<div class="a" style="left:704.90px;top:93.800px;width:1px;height:13.360px;background:#bcd4d4"></div>
<div class="a" style="left:754.90px;top:93.800px;width:1px;height:13.360px;background:#bcd4d4"></div>
<div class="a" style="left:804.90px;top:93.800px;width:1px;height:13.360px;background:#bcd4d4"></div>
<div class="a" style="left:15px;top:99.850px;width:5.4px;height:1.6px;background:#6868d4"></div>
<div style="position:absolute;top:96.00px;white-space:pre;font-family:'Liberation Sans', sans-serif;font-size:9.3px;line-height:11.16px;color:#000;font-weight:bold;left:24.10px;width:121.88px;transform-origin:0 0;transform:scaleX(1.1637);">NFLX Sep 470/480 Bull Call</div>
<svg class="a" style="left:185px;top:93.800px" width="16" height="13" viewBox="0 0 16 13"><rect x="5.25" y="3.75" width="5.9" height="5.7" fill="#fff" stroke="#8c8c8c" stroke-width="0.7"/><path d="M6.4 5.9 L8.0 8.1 L11.9 2.3" fill="none" stroke="#000" stroke-width="1.25" stroke-linecap="round" stroke-linejoin="round"/></svg>
<div style="position:absolute;top:96.00px;white-space:pre;font-family:'Liberation Sans', sans-serif;font-size:9.3px;line-height:11.16px;color:#000;font-weight:bold;left:242.88px;width:10.28px;transform-origin:0 0;transform:scaleX(1.2700);">-5</div>
<div style="position:absolute;top:96.00px;white-space:pre;font-family:'Liberation Sans', sans-serif;font-size:9.3px;line-height:11.16px;color:#000;font-weight:bold;left:279.90px;width:20.11px;transform-origin:0 0;transform:scaleX(1.2700);">0.46</div>
<div style="position:absolute;top:96.00px;white-space:pre;font-family:'Liberation Sans', sans-serif;font-size:9.3px;line-height:11.16px;color:#000;font-weight:bold;left:346.53px;width:7.17px;transform-origin:0 0;transform:scaleX(1.2700);">0</div>
<div style="position:absolute;top:96.00px;white-space:pre;font-family:'Liberation Sans', sans-serif;font-size:9.3px;line-height:11.16px;color:#000;font-weight:bold;left:368.60px;width:28.38px;transform-origin:0 0;transform:scaleX(1.2700);">-3,162</div>
<div style="position:absolute;top:96.00px;white-space:pre;font-family:'Liberation Sans', sans-serif;font-size:9.3px;line-height:11.16px;color:#000;font-weight:bold;left:492.88px;width:10.28px;transform-origin:0 0;transform:scaleX(1.2700);">-8</div>
<div style="position:absolute;top:96.00px;white-space:pre;font-family:'Liberation Sans', sans-serif;font-size:9.3px;line-height:11.16px;color:#000;font-weight:bold;left:546.53px;width:7.17px;transform-origin:0 0;transform:scaleX(1.2700);">0</div>
<div style="position:absolute;top:96.00px;white-space:pre;font-family:'Liberation Sans', sans-serif;font-size:9.3px;line-height:11.16px;color:#000;font-weight:bold;left:597.03px;width:7.17px;transform-origin:0 0;transform:scaleX(1.2700);">1</div>
<div style="position:absolute;top:96.00px;white-space:pre;font-family:'Liberation Sans', sans-serif;font-size:9.3px;line-height:11.16px;color:#000;font-weight:bold;left:647.53px;width:7.17px;transform-origin:0 0;transform:scaleX(1.2700);">5</div>
<div style="position:absolute;top:96.00px;white-space:pre;font-family:'Liberation Sans', sans-serif;font-size:9.3px;line-height:11.16px;color:#000;font-weight:bold;left:731.30px;width:20.11px;transform-origin:0 0;transform:scaleX(1.2700);">0.46</div>
<div class="a" style="left:0;top:120.170px;width:768px;height:1px;background:#c6c6c6"></div>
<div class="a" style="left:182.00px;top:107.160px;width:1px;height:13.360px;background:#c6c6c6"></div>
<div class="a" style="left:204.00px;top:107.160px;width:1px;height:13.360px;background:#c6c6c6"></div>
<div class="a" style="left:254.10px;top:107.160px;width:1px;height:13.360px;background:#c6c6c6"></div>
<div class="a" style="left:304.10px;top:107.160px;width:1px;height:13.360px;background:#c6c6c6"></div>
<div class="a" style="left:353.90px;top:107.160px;width:1px;height:13.360px;background:#c6c6c6"></div>
<div class="a" style="left:404.00px;top:107.160px;width:1px;height:13.360px;background:#c6c6c6"></div>
<div class="a" style="left:454.00px;top:107.160px;width:1px;height:13.360px;background:#c6c6c6"></div>
<div class="a" style="left:504.00px;top:107.160px;width:1px;height:13.360px;background:#c6c6c6"></div>
<div class="a" style="left:554.10px;top:107.160px;width:1px;height:13.360px;background:#c6c6c6"></div>
<div class="a" style="left:604.00px;top:107.160px;width:1px;height:13.360px;background:#c6c6c6"></div>
<div class="a" style="left:654.90px;top:107.160px;width:1px;height:13.360px;background:#c6c6c6"></div>
<div class="a" style="left:704.90px;top:107.160px;width:1px;height:13.360px;background:#c6c6c6"></div>
<div class="a" style="left:754.90px;top:107.160px;width:1px;height:13.360px;background:#c6c6c6"></div>
<div class="a" style="left:804.90px;top:107.160px;width:1px;height:13.360px;background:#c6c6c6"></div>
<div style="position:absolute;top:109.00px;white-space:pre;font-family:'Liberation Sans', sans-serif;font-size:9.3px;line-height:11.16px;color:#1e1e1e;-webkit-text-stroke:0.15px #1e1e1e;left:46.20px;width:111.11px;transform-origin:0 0;transform:scaleX(1.0687);">NFLX SEP 21 &#x27;18 470 Call</div>
<div style="position:absolute;top:109.00px;white-space:pre;font-family:'Liberation Sans', sans-serif;font-size:9.3px;line-height:11.16px;color:#e59a68;-webkit-text-stroke:0.15px #e59a68;left:244.12px;width:10.28px;transform-origin:0 0;transform:scaleX(1.1200);">-5</div>
<div style="position:absolute;top:109.00px;white-space:pre;font-family:'Liberation Sans', sans-serif;font-size:9.3px;line-height:11.16px;color:#1e1e1e;-webkit-text-stroke:0.15px #1e1e1e;left:282.62px;width:20.11px;transform-origin:0 0;transform:scaleX(1.1200);">2.19</div>
<div style="position:absolute;top:109.00px;white-space:pre;font-family:'Liberation Sans', sans-serif;font-size:9.3px;line-height:11.16px;color:#1e1e1e;-webkit-text-stroke:0.15px #1e1e1e;left:347.31px;width:7.17px;transform-origin:0 0;transform:scaleX(1.1200);">0</div>
<div style="position:absolute;top:109.00px;white-space:pre;font-family:'Liberation Sans', sans-serif;font-size:9.3px;line-height:11.16px;color:#1e1e1e;-webkit-text-stroke:0.15px #1e1e1e;left:366.77px;width:33.55px;transform-origin:0 0;transform:scaleX(1.1200);">-16,613</div>
<div style="position:absolute;top:109.00px;white-space:pre;font-family:'Liberation Sans', sans-serif;font-size:9.3px;line-height:11.16px;color:#1e1e1e;-webkit-text-stroke:0.15px #1e1e1e;left:421.25px;width:30.44px;transform-origin:0 0;transform:scaleX(1.1200);">0.0884</div>
<div style="position:absolute;top:109.00px;white-space:pre;font-family:'Liberation Sans', sans-serif;font-size:9.3px;line-height:11.16px;color:#1e1e1e;-webkit-text-stroke:0.15px #1e1e1e;left:488.35px;width:15.44px;transform-origin:0 0;transform:scaleX(1.1200);">-44</div>
<div style="position:absolute;top:109.00px;white-space:pre;font-family:'Liberation Sans', sans-serif;font-size:9.3px;line-height:11.16px;color:#1e1e1e;-webkit-text-stroke:0.15px #1e1e1e;left:543.83px;width:10.28px;transform-origin:0 0;transform:scaleX(1.1200);">-1</div>
<div style="position:absolute;top:109.00px;white-space:pre;font-family:'Liberation Sans', sans-serif;font-size:9.3px;line-height:11.16px;color:#1e1e1e;-webkit-text-stroke:0.15px #1e1e1e;left:583.53px;width:19.92px;transform-origin:0 0;transform:scaleX(1.1200);">-117</div>
<div style="position:absolute;top:109.00px;white-space:pre;font-family:'Liberation Sans', sans-serif;font-size:9.3px;line-height:11.16px;color:#1e1e1e;-webkit-text-stroke:0.15px #1e1e1e;left:642.51px;width:12.34px;transform-origin:0 0;transform:scaleX(1.1200);">37</div>
<div style="position:absolute;top:109.00px;white-space:pre;font-family:'Liberation Sans', sans-serif;font-size:9.3px;line-height:11.16px;color:#1e1e1e;-webkit-text-stroke:0.15px #1e1e1e;left:657.78px;width:43.36px;transform-origin:0 0;transform:scaleX(1.1200);">36.8005...</div>
<div style="position:absolute;top:109.00px;white-space:pre;font-family:'Liberation Sans', sans-serif;font-size:9.3px;line-height:11.16px;color:#1e1e1e;-webkit-text-stroke:0.15px #1e1e1e;left:734.02px;width:20.11px;transform-origin:0 0;transform:scaleX(1.1200);">2.19</div>
<div class="a" style="left:0;top:133.530px;width:768px;height:1px;background:#c6c6c6"></div>
<div class="a" style="left:182.00px;top:120.520px;width:1px;height:13.360px;background:#c6c6c6"></div>
<div class="a" style="left:204.00px;top:120.520px;width:1px;height:13.360px;background:#c6c6c6"></div>
<div class="a" style="left:254.10px;top:120.520px;width:1px;height:13.360px;background:#c6c6c6"></div>
<div class="a" style="left:304.10px;top:120.520px;width:1px;height:13.360px;background:#c6c6c6"></div>
<div class="a" style="left:353.90px;top:120.520px;width:1px;height:13.360px;background:#c6c6c6"></div>
<div class="a" style="left:404.00px;top:120.520px;width:1px;height:13.360px;background:#c6c6c6"></div>
<div class="a" style="left:454.00px;top:120.520px;width:1px;height:13.360px;background:#c6c6c6"></div>
<div class="a" style="left:504.00px;top:120.520px;width:1px;height:13.360px;background:#c6c6c6"></div>
<div class="a" style="left:554.10px;top:120.520px;width:1px;height:13.360px;background:#c6c6c6"></div>
<div class="a" style="left:604.00px;top:120.520px;width:1px;height:13.360px;background:#c6c6c6"></div>
<div class="a" style="left:654.90px;top:120.520px;width:1px;height:13.360px;background:#c6c6c6"></div>
<div class="a" style="left:704.90px;top:120.520px;width:1px;height:13.360px;background:#c6c6c6"></div>
<div class="a" style="left:754.90px;top:120.520px;width:1px;height:13.360px;background:#c6c6c6"></div>
<div class="a" style="left:804.90px;top:120.520px;width:1px;height:13.360px;background:#c6c6c6"></div>
<div style="position:absolute;top:123.00px;white-space:pre;font-family:'Liberation Sans', sans-serif;font-size:9.3px;line-height:11.16px;color:#1e1e1e;-webkit-text-stroke:0.15px #1e1e1e;left:46.20px;width:111.11px;transform-origin:0 0;transform:scaleX(1.0687);">NFLX SEP 21 &#x27;18 480 Call</div>
<div style="position:absolute;top:123.00px;white-space:pre;font-family:'Liberation Sans', sans-serif;font-size:9.3px;line-height:11.16px;color:#e59a68;-webkit-text-stroke:0.15px #e59a68;left:247.61px;width:7.17px;transform-origin:0 0;transform:scaleX(1.1200);">5</div>
<div style="position:absolute;top:123.00px;white-space:pre;font-family:'Liberation Sans', sans-serif;font-size:9.3px;line-height:11.16px;color:#1e1e1e;-webkit-text-stroke:0.15px #1e1e1e;left:282.62px;width:20.11px;transform-origin:0 0;transform:scaleX(1.1200);">1.73</div>
<div style="position:absolute;top:123.00px;white-space:pre;font-family:'Liberation Sans', sans-serif;font-size:9.3px;line-height:11.16px;color:#1e1e1e;-webkit-text-stroke:0.15px #1e1e1e;left:347.31px;width:7.17px;transform-origin:0 0;transform:scaleX(1.1200);">0</div>
<div style="position:absolute;top:123.00px;white-space:pre;font-family:'Liberation Sans', sans-serif;font-size:9.3px;line-height:11.16px;color:#1e1e1e;-webkit-text-stroke:0.15px #1e1e1e;left:370.25px;width:30.44px;transform-origin:0 0;transform:scaleX(1.1200);">13,452</div>
<div style="position:absolute;top:123.00px;white-space:pre;font-family:'Liberation Sans', sans-serif;font-size:9.3px;line-height:11.16px;color:#1e1e1e;-webkit-text-stroke:0.15px #1e1e1e;left:421.25px;width:30.44px;transform-origin:0 0;transform:scaleX(1.1200);">0.0716</div>
<div style="position:absolute;top:123.00px;white-space:pre;font-family:'Liberation Sans', sans-serif;font-size:9.3px;line-height:11.16px;color:#1e1e1e;-webkit-text-stroke:0.15px #1e1e1e;left:491.81px;width:12.34px;transform-origin:0 0;transform:scaleX(1.1200);">36</div>
<div style="position:absolute;top:123.00px;white-space:pre;font-family:'Liberation Sans', sans-serif;font-size:9.3px;line-height:11.16px;color:#1e1e1e;-webkit-text-stroke:0.15px #1e1e1e;left:547.31px;width:7.17px;transform-origin:0 0;transform:scaleX(1.1200);">1</div>
<div style="position:absolute;top:123.00px;white-space:pre;font-family:'Liberation Sans', sans-serif;font-size:9.3px;line-height:11.16px;color:#1e1e1e;-webkit-text-stroke:0.15px #1e1e1e;left:586.99px;width:16.83px;transform-origin:0 0;transform:scaleX(1.1200);">118</div>
<div style="position:absolute;top:123.00px;white-space:pre;font-family:'Liberation Sans', sans-serif;font-size:9.3px;line-height:11.16px;color:#1e1e1e;-webkit-text-stroke:0.15px #1e1e1e;left:639.05px;width:15.44px;transform-origin:0 0;transform:scaleX(1.1200);">-32</div>
<div style="position:absolute;top:123.00px;white-space:pre;font-family:'Liberation Sans', sans-serif;font-size:9.3px;line-height:11.16px;color:#1e1e1e;-webkit-text-stroke:0.15px #1e1e1e;left:657.78px;width:43.36px;transform-origin:0 0;transform:scaleX(1.1200);">37.3502...</div>
<div style="position:absolute;top:123.00px;white-space:pre;font-family:'Liberation Sans', sans-serif;font-size:9.3px;line-height:11.16px;color:#1e1e1e;-webkit-text-stroke:0.15px #1e1e1e;left:734.02px;width:20.11px;transform-origin:0 0;transform:scaleX(1.1200);">1.73</div>
<div class="a" style="left:0;top:146.890px;width:768px;height:1px;background:#c6c6c6"></div>
<div class="a" style="left:182.00px;top:133.880px;width:1px;height:13.360px;background:#c6c6c6"></div>
<div class="a" style="left:204.00px;top:133.880px;width:1px;height:13.360px;background:#c6c6c6"></div>
<div class="a" style="left:254.10px;top:133.880px;width:1px;height:13.360px;background:#c6c6c6"></div>
<div class="a" style="left:304.10px;top:133.880px;width:1px;height:13.360px;background:#c6c6c6"></div>
<div class="a" style="left:353.90px;top:133.880px;width:1px;height:13.360px;background:#c6c6c6"></div>
<div class="a" style="left:404.00px;top:133.880px;width:1px;height:13.360px;background:#c6c6c6"></div>
<div class="a" style="left:454.00px;top:133.880px;width:1px;height:13.360px;background:#c6c6c6"></div>
<div class="a" style="left:504.00px;top:133.880px;width:1px;height:13.360px;background:#c6c6c6"></div>
<div class="a" style="left:554.10px;top:133.880px;width:1px;height:13.360px;background:#c6c6c6"></div>
<div class="a" style="left:604.00px;top:133.880px;width:1px;height:13.360px;background:#c6c6c6"></div>
<div class="a" style="left:654.90px;top:133.880px;width:1px;height:13.360px;background:#c6c6c6"></div>
<div class="a" style="left:704.90px;top:133.880px;width:1px;height:13.360px;background:#c6c6c6"></div>
<div class="a" style="left:754.90px;top:133.880px;width:1px;height:13.360px;background:#c6c6c6"></div>
<div class="a" style="left:804.90px;top:133.880px;width:1px;height:13.360px;background:#c6c6c6"></div>
<div style="position:absolute;top:136.00px;white-space:pre;font-family:'Liberation Sans', sans-serif;font-size:9.3px;line-height:11.16px;color:#d0eed0;left:80.05px;width:23.70px;transform-origin:0 0;transform:scaleX(1.0091);">NEW</div>
<svg class="a" style="left:0;top:0" width="768" height="554"><rect x="3.05" y="154.25" width="1.7" height="1.7" fill="#7c7c7c"/><rect x="9.74" y="154.25" width="1.7" height="1.7" fill="#7c7c7c"/><rect x="16.43" y="154.25" width="1.7" height="1.7" fill="#7c7c7c"/><rect x="23.11" y="154.25" width="1.7" height="1.7" fill="#7c7c7c"/><rect x="29.80" y="154.25" width="1.7" height="1.7" fill="#7c7c7c"/><rect x="36.49" y="154.25" width="1.7" height="1.7" fill="#7c7c7c"/><rect x="43.18" y="154.25" width="1.7" height="1.7" fill="#7c7c7c"/><rect x="49.87" y="154.25" width="1.7" height="1.7" fill="#7c7c7c"/><rect x="56.55" y="154.25" width="1.7" height="1.7" fill="#7c7c7c"/><rect x="63.24" y="154.25" width="1.7" height="1.7" fill="#7c7c7c"/><rect x="69.93" y="154.25" width="1.7" height="1.7" fill="#7c7c7c"/><rect x="76.62" y="154.25" width="1.7" height="1.7" fill="#7c7c7c"/><rect x="83.31" y="154.25" width="1.7" height="1.7" fill="#7c7c7c"/><rect x="89.99" y="154.25" width="1.7" height="1.7" fill="#7c7c7c"/><rect x="96.68" y="154.25" width="1.7" height="1.7" fill="#7c7c7c"/><rect x="103.37" y="154.25" width="1.7" height="1.7" fill="#7c7c7c"/><rect x="110.06" y="154.25" width="1.7" height="1.7" fill="#7c7c7c"/><rect x="116.75" y="154.25" width="1.7" height="1.7" fill="#7c7c7c"/><rect x="123.43" y="154.25" width="1.7" height="1.7" fill="#7c7c7c"/><rect x="130.12" y="154.25" width="1.7" height="1.7" fill="#7c7c7c"/><rect x="136.81" y="154.25" width="1.7" height="1.7" fill="#7c7c7c"/><rect x="143.50" y="154.25" width="1.7" height="1.7" fill="#7c7c7c"/><rect x="150.19" y="154.25" width="1.7" height="1.7" fill="#7c7c7c"/><rect x="156.87" y="154.25" width="1.7" height="1.7" fill="#7c7c7c"/><rect x="163.56" y="154.25" width="1.7" height="1.7" fill="#7c7c7c"/><rect x="170.25" y="154.25" width="1.7" height="1.7" fill="#7c7c7c"/><rect x="176.94" y="154.25" width="1.7" height="1.7" fill="#7c7c7c"/><rect x="183.63" y="154.25" width="1.7" height="1.7" fill="#7c7c7c"/><rect x="190.31" y="154.25" width="1.7" height="1.7" fill="#7c7c7c"/><rect x="197.00" y="154.25" width="1.7" height="1.7" fill="#7c7c7c"/><rect x="203.69" y="154.25" width="1.7" height="1.7" fill="#7c7c7c"/><rect x="210.38" y="154.25" width="1.7" height="1.7" fill="#7c7c7c"/><rect x="217.07" y="154.25" width="1.7" height="1.7" fill="#7c7c7c"/><rect x="223.75" y="154.25" width="1.7" height="1.7" fill="#7c7c7c"/><rect x="230.44" y="154.25" width="1.7" height="1.7" fill="#7c7c7c"/><rect x="237.13" y="154.25" width="1.7" height="1.7" fill="#7c7c7c"/><rect x="243.82" y="154.25" width="1.7" height="1.7" fill="#7c7c7c"/><rect x="250.51" y="154.25" width="1.7" height="1.7" fill="#7c7c7c"/><rect x="257.19" y="154.25" width="1.7" height="1.7" fill="#7c7c7c"/><rect x="263.88" y="154.25" width="1.7" height="1.7" fill="#7c7c7c"/><rect x="270.57" y="154.25" width="1.7" height="1.7" fill="#7c7c7c"/><rect x="277.26" y="154.25" width="1.7" height="1.7" fill="#7c7c7c"/><rect x="283.95" y="154.25" width="1.7" height="1.7" fill="#7c7c7c"/><rect x="290.63" y="154.25" width="1.7" height="1.7" fill="#7c7c7c"/><rect x="297.32" y="154.25" width="1.7" height="1.7" fill="#7c7c7c"/><rect x="304.01" y="154.25" width="1.7" height="1.7" fill="#7c7c7c"/><rect x="310.70" y="154.25" width="1.7" height="1.7" fill="#7c7c7c"/><rect x="317.39" y="154.25" width="1.7" height="1.7" fill="#7c7c7c"/><rect x="324.07" y="154.25" width="1.7" height="1.7" fill="#7c7c7c"/><rect x="330.76" y="154.25" width="1.7" height="1.7" fill="#7c7c7c"/><rect x="337.45" y="154.25" width="1.7" height="1.7" fill="#7c7c7c"/><rect x="344.14" y="154.25" width="1.7" height="1.7" fill="#7c7c7c"/><rect x="350.83" y="154.25" width="1.7" height="1.7" fill="#7c7c7c"/><rect x="357.51" y="154.25" width="1.7" height="1.7" fill="#7c7c7c"/><rect x="364.20" y="154.25" width="1.7" height="1.7" fill="#7c7c7c"/><rect x="370.89" y="154.25" width="1.7" height="1.7" fill="#7c7c7c"/><rect x="377.58" y="154.25" width="1.7" height="1.7" fill="#7c7c7c"/><rect x="384.27" y="154.25" width="1.7" height="1.7" fill="#7c7c7c"/><rect x="390.95" y="154.25" width="1.7" height="1.7" fill="#7c7c7c"/><rect x="397.64" y="154.25" width="1.7" height="1.7" fill="#7c7c7c"/><rect x="404.33" y="154.25" width="1.7" height="1.7" fill="#7c7c7c"/><rect x="411.02" y="154.25" width="1.7" height="1.7" fill="#7c7c7c"/><rect x="417.71" y="154.25" width="1.7" height="1.7" fill="#7c7c7c"/><rect x="424.39" y="154.25" width="1.7" height="1.7" fill="#7c7c7c"/><rect x="431.08" y="154.25" width="1.7" height="1.7" fill="#7c7c7c"/><rect x="437.77" y="154.25" width="1.7" height="1.7" fill="#7c7c7c"/><rect x="444.46" y="154.25" width="1.7" height="1.7" fill="#7c7c7c"/><rect x="451.15" y="154.25" width="1.7" height="1.7" fill="#7c7c7c"/><rect x="457.83" y="154.25" width="1.7" height="1.7" fill="#7c7c7c"/><rect x="464.52" y="154.25" width="1.7" height="1.7" fill="#7c7c7c"/><rect x="471.21" y="154.25" width="1.7" height="1.7" fill="#7c7c7c"/><rect x="477.90" y="154.25" width="1.7" height="1.7" fill="#7c7c7c"/><rect x="484.59" y="154.25" width="1.7" height="1.7" fill="#7c7c7c"/><rect x="491.27" y="154.25" width="1.7" height="1.7" fill="#7c7c7c"/><rect x="497.96" y="154.25" width="1.7" height="1.7" fill="#7c7c7c"/><rect x="504.65" y="154.25" width="1.7" height="1.7" fill="#7c7c7c"/><rect x="511.34" y="154.25" width="1.7" height="1.7" fill="#7c7c7c"/><rect x="518.03" y="154.25" width="1.7" height="1.7" fill="#7c7c7c"/><rect x="524.71" y="154.25" width="1.7" height="1.7" fill="#7c7c7c"/><rect x="531.40" y="154.25" width="1.7" height="1.7" fill="#7c7c7c"/><rect x="538.09" y="154.25" width="1.7" height="1.7" fill="#7c7c7c"/><rect x="544.78" y="154.25" width="1.7" height="1.7" fill="#7c7c7c"/><rect x="551.47" y="154.25" width="1.7" height="1.7" fill="#7c7c7c"/><rect x="558.15" y="154.25" width="1.7" height="1.7" fill="#7c7c7c"/><rect x="564.84" y="154.25" width="1.7" height="1.7" fill="#7c7c7c"/><rect x="571.53" y="154.25" width="1.7" height="1.7" fill="#7c7c7c"/><rect x="578.22" y="154.25" width="1.7" height="1.7" fill="#7c7c7c"/><rect x="584.91" y="154.25" width="1.7" height="1.7" fill="#7c7c7c"/><rect x="591.59" y="154.25" width="1.7" height="1.7" fill="#7c7c7c"/><rect x="598.28" y="154.25" width="1.7" height="1.7" fill="#7c7c7c"/><rect x="604.97" y="154.25" width="1.7" height="1.7" fill="#7c7c7c"/><rect x="611.66" y="154.25" width="1.7" height="1.7" fill="#7c7c7c"/><rect x="618.35" y="154.25" width="1.7" height="1.7" fill="#7c7c7c"/><rect x="625.03" y="154.25" width="1.7" height="1.7" fill="#7c7c7c"/><rect x="631.72" y="154.25" width="1.7" height="1.7" fill="#7c7c7c"/><rect x="638.41" y="154.25" width="1.7" height="1.7" fill="#7c7c7c"/><rect x="645.10" y="154.25" width="1.7" height="1.7" fill="#7c7c7c"/><rect x="651.79" y="154.25" width="1.7" height="1.7" fill="#7c7c7c"/><rect x="658.47" y="154.25" width="1.7" height="1.7" fill="#7c7c7c"/><rect x="665.16" y="154.25" width="1.7" height="1.7" fill="#7c7c7c"/><rect x="671.85" y="154.25" width="1.7" height="1.7" fill="#7c7c7c"/><rect x="678.54" y="154.25" width="1.7" height="1.7" fill="#7c7c7c"/><rect x="685.23" y="154.25" width="1.7" height="1.7" fill="#7c7c7c"/><rect x="691.91" y="154.25" width="1.7" height="1.7" fill="#7c7c7c"/><rect x="698.60" y="154.25" width="1.7" height="1.7" fill="#7c7c7c"/><rect x="705.29" y="154.25" width="1.7" height="1.7" fill="#7c7c7c"/><rect x="711.98" y="154.25" width="1.7" height="1.7" fill="#7c7c7c"/><rect x="718.67" y="154.25" width="1.7" height="1.7" fill="#7c7c7c"/><rect x="725.35" y="154.25" width="1.7" height="1.7" fill="#7c7c7c"/><rect x="732.04" y="154.25" width="1.7" height="1.7" fill="#7c7c7c"/><rect x="738.73" y="154.25" width="1.7" height="1.7" fill="#7c7c7c"/><rect x="745.42" y="154.25" width="1.7" height="1.7" fill="#7c7c7c"/><rect x="752.11" y="154.25" width="1.7" height="1.7" fill="#7c7c7c"/><rect x="758.79" y="154.25" width="1.7" height="1.7" fill="#7c7c7c"/><rect x="765.48" y="154.25" width="1.7" height="1.7" fill="#7c7c7c"/><rect x="772.17" y="154.25" width="1.7" height="1.7" fill="#7c7c7c"/></svg>
<div class="a" style="left:1.6px;top:158.2px;width:57.60px;height:10.00px;border-radius:3.5px;background:linear-gradient(#f4f4f4,#e0e0e0);border:0.7px solid #c8c8c8;box-shadow:0 1px 0.8px #b0b0b0"></div>
<div style="position:absolute;top:159.00px;white-space:pre;font-family:'Liberation Sans', sans-serif;font-size:8.0px;line-height:9.60px;color:#222;left:5.90px;width:25.58px;transform-origin:0 0;transform:scaleX(1.1409);">Range</div>
<svg class="a" style="left:47.6px;top:161.3px" width="6" height="4"><path d="M0 0 L4.8 0 L2.4 3Z" fill="#1a30ff"/></svg>
<div class="a" style="left:62.1px;top:158.0px;width:39.50px;height:10.20px;border-radius:3.5px;background:linear-gradient(#f4f4f4,#e0e0e0);border:0.7px solid #c8c8c8;box-shadow:0 1px 0.8px #b0b0b0"></div>
<div style="position:absolute;top:159.00px;white-space:pre;font-family:'Liberation Sans', sans-serif;font-size:8.0px;line-height:9.60px;color:#222;left:67.00px;width:27.80px;transform-origin:0 0;transform:scaleX(1.1474);">Update</div>
<div class="a" style="left:623.6px;top:157.9px;width:90.20px;height:11.10px;border-radius:3.5px;background:linear-gradient(#f4f4f4,#e0e0e0);border:0.7px solid #c8c8c8;box-shadow:0 1px 0.8px #b0b0b0"></div>
<div style="position:absolute;top:160.00px;white-space:pre;font-family:'Liberation Sans', sans-serif;font-size:8.0px;line-height:9.60px;color:#222;left:628.40px;width:54.05px;transform-origin:0 0;transform:scaleX(1.1259);">Eq percentage</div>
<svg class="a" style="left:701.4px;top:161.8px" width="6" height="4"><path d="M0 0 L4.8 0 L2.4 3Z" fill="#1a30ff"/></svg>
<div class="a" style="left:716.4px;top:157.8px;width:48.00px;height:11.40px;border-radius:3.5px;background:linear-gradient(#f4f4f4,#e0e0e0);border:0.7px solid #c8c8c8;box-shadow:0 1px 0.8px #b0b0b0"></div>
<svg class="a" style="left:720px;top:156.8px" width="14" height="13"><path d="M7.0 7.0 L10.8 10.8" stroke="#b89a7a" stroke-width="2.0" stroke-linecap="round"/><circle cx="5.0" cy="5.0" r="3.1" fill="#c4dcc4" stroke="#98a4a4" stroke-width="1.1"/><circle cx="4.6" cy="4.6" r="1.1" fill="#6cba6c"/></svg>
<div style="position:absolute;top:160.00px;white-space:pre;font-family:'Liberation Sans', sans-serif;font-size:8.0px;line-height:9.60px;color:#222;left:736.10px;width:22.45px;transform-origin:0 0;transform:scaleX(1.1490);">Zoom</div>
<svg class="a" style="left:0;top:0" width="768" height="554"><rect x="49.75" y="173.4" width="711.15" height="363.70000000000005" fill="#ffffff"/><line x1="49.75" y1="524.50" x2="760.9" y2="524.50" stroke="#cacaca" stroke-width="0.9"/><line x1="47.75" y1="524.50" x2="49.75" y2="524.50" stroke="#8a8a8a" stroke-width="0.9"/><line x1="49.75" y1="508.85" x2="760.9" y2="508.85" stroke="#cacaca" stroke-width="0.9"/><line x1="47.75" y1="508.85" x2="49.75" y2="508.85" stroke="#8a8a8a" stroke-width="0.9"/><line x1="49.75" y1="493.20" x2="760.9" y2="493.20" stroke="#cacaca" stroke-width="0.9"/><line x1="47.75" y1="493.20" x2="49.75" y2="493.20" stroke="#8a8a8a" stroke-width="0.9"/><line x1="49.75" y1="477.55" x2="760.9" y2="477.55" stroke="#cacaca" stroke-width="0.9"/><line x1="47.75" y1="477.55" x2="49.75" y2="477.55" stroke="#8a8a8a" stroke-width="0.9"/><line x1="49.75" y1="461.90" x2="760.9" y2="461.90" stroke="#cacaca" stroke-width="0.9"/><line x1="47.75" y1="461.90" x2="49.75" y2="461.90" stroke="#8a8a8a" stroke-width="0.9"/><line x1="49.75" y1="446.25" x2="760.9" y2="446.25" stroke="#cacaca" stroke-width="0.9"/><line x1="47.75" y1="446.25" x2="49.75" y2="446.25" stroke="#8a8a8a" stroke-width="0.9"/><line x1="49.75" y1="430.60" x2="760.9" y2="430.60" stroke="#cacaca" stroke-width="0.9"/><line x1="47.75" y1="430.60" x2="49.75" y2="430.60" stroke="#8a8a8a" stroke-width="0.9"/><line x1="49.75" y1="414.95" x2="760.9" y2="414.95" stroke="#cacaca" stroke-width="0.9"/><line x1="47.75" y1="414.95" x2="49.75" y2="414.95" stroke="#8a8a8a" stroke-width="0.9"/><line x1="49.75" y1="399.30" x2="760.9" y2="399.30" stroke="#cacaca" stroke-width="0.9"/><line x1="47.75" y1="399.30" x2="49.75" y2="399.30" stroke="#8a8a8a" stroke-width="0.9"/><line x1="49.75" y1="383.65" x2="760.9" y2="383.65" stroke="#cacaca" stroke-width="0.9"/><line x1="47.75" y1="383.65" x2="49.75" y2="383.65" stroke="#8a8a8a" stroke-width="0.9"/><line x1="49.75" y1="368.00" x2="760.9" y2="368.00" stroke="#cacaca" stroke-width="0.9"/><line x1="47.75" y1="368.00" x2="49.75" y2="368.00" stroke="#8a8a8a" stroke-width="0.9"/><line x1="49.75" y1="352.35" x2="760.9" y2="352.35" stroke="#cacaca" stroke-width="0.9"/><line x1="47.75" y1="352.35" x2="49.75" y2="352.35" stroke="#8a8a8a" stroke-width="0.9"/><line x1="49.75" y1="336.70" x2="760.9" y2="336.70" stroke="#cacaca" stroke-width="0.9"/><line x1="47.75" y1="336.70" x2="49.75" y2="336.70" stroke="#8a8a8a" stroke-width="0.9"/><line x1="49.75" y1="321.05" x2="760.9" y2="321.05" stroke="#cacaca" stroke-width="0.9"/><line x1="47.75" y1="321.05" x2="49.75" y2="321.05" stroke="#8a8a8a" stroke-width="0.9"/><line x1="49.75" y1="305.40" x2="760.9" y2="305.40" stroke="#cacaca" stroke-width="0.9"/><line x1="47.75" y1="305.40" x2="49.75" y2="305.40" stroke="#8a8a8a" stroke-width="0.9"/><line x1="49.75" y1="289.75" x2="760.9" y2="289.75" stroke="#cacaca" stroke-width="0.9"/><line x1="47.75" y1="289.75" x2="49.75" y2="289.75" stroke="#8a8a8a" stroke-width="0.9"/><line x1="49.75" y1="274.10" x2="760.9" y2="274.10" stroke="#cacaca" stroke-width="0.9"/><line x1="47.75" y1="274.10" x2="49.75" y2="274.10" stroke="#8a8a8a" stroke-width="0.9"/><line x1="49.75" y1="258.45" x2="760.9" y2="258.45" stroke="#cacaca" stroke-width="0.9"/><line x1="47.75" y1="258.45" x2="49.75" y2="258.45" stroke="#8a8a8a" stroke-width="0.9"/><line x1="49.75" y1="242.80" x2="760.9" y2="242.80" stroke="#cacaca" stroke-width="0.9"/><line x1="47.75" y1="242.80" x2="49.75" y2="242.80" stroke="#8a8a8a" stroke-width="0.9"/><line x1="49.75" y1="226.60" x2="760.9" y2="226.60" stroke="#7c7c7c" stroke-width="1.0"/><line x1="47.75" y1="226.60" x2="49.75" y2="226.60" stroke="#8a8a8a" stroke-width="0.9"/><line x1="49.75" y1="211.50" x2="760.9" y2="211.50" stroke="#cacaca" stroke-width="0.9"/><line x1="47.75" y1="211.50" x2="49.75" y2="211.50" stroke="#8a8a8a" stroke-width="0.9"/><line x1="49.75" y1="195.85" x2="760.9" y2="195.85" stroke="#cacaca" stroke-width="0.9"/><line x1="47.75" y1="195.85" x2="49.75" y2="195.85" stroke="#8a8a8a" stroke-width="0.9"/><line x1="49.75" y1="180.20" x2="760.9" y2="180.20" stroke="#cacaca" stroke-width="0.9"/><line x1="47.75" y1="180.20" x2="49.75" y2="180.20" stroke="#8a8a8a" stroke-width="0.9"/><line x1="50.02" y1="173.4" x2="50.02" y2="537.1" stroke="#c0c0c0" stroke-width="0.9"/><line x1="50.02" y1="537.1" x2="50.02" y2="539.1" stroke="#8a8a8a" stroke-width="0.9"/><line x1="80.75" y1="173.4" x2="80.75" y2="537.1" stroke="#c0c0c0" stroke-width="0.9"/><line x1="80.75" y1="537.1" x2="80.75" y2="539.1" stroke="#8a8a8a" stroke-width="0.9"/><line x1="111.47" y1="173.4" x2="111.47" y2="537.1" stroke="#c0c0c0" stroke-width="0.9"/><line x1="111.47" y1="537.1" x2="111.47" y2="539.1" stroke="#8a8a8a" stroke-width="0.9"/><line x1="142.20" y1="173.4" x2="142.20" y2="537.1" stroke="#c0c0c0" stroke-width="0.9"/><line x1="142.20" y1="537.1" x2="142.20" y2="539.1" stroke="#8a8a8a" stroke-width="0.9"/><line x1="172.92" y1="173.4" x2="172.92" y2="537.1" stroke="#c0c0c0" stroke-width="0.9"/><line x1="172.92" y1="537.1" x2="172.92" y2="539.1" stroke="#8a8a8a" stroke-width="0.9"/><line x1="203.65" y1="173.4" x2="203.65" y2="537.1" stroke="#c0c0c0" stroke-width="0.9"/><line x1="203.65" y1="537.1" x2="203.65" y2="539.1" stroke="#8a8a8a" stroke-width="0.9"/><line x1="234.38" y1="173.4" x2="234.38" y2="537.1" stroke="#c0c0c0" stroke-width="0.9"/><line x1="234.38" y1="537.1" x2="234.38" y2="539.1" stroke="#8a8a8a" stroke-width="0.9"/><line x1="265.10" y1="173.4" x2="265.10" y2="537.1" stroke="#c0c0c0" stroke-width="0.9"/><line x1="265.10" y1="537.1" x2="265.10" y2="539.1" stroke="#8a8a8a" stroke-width="0.9"/><line x1="295.82" y1="173.4" x2="295.82" y2="537.1" stroke="#c0c0c0" stroke-width="0.9"/><line x1="295.82" y1="537.1" x2="295.82" y2="539.1" stroke="#8a8a8a" stroke-width="0.9"/><line x1="326.55" y1="173.4" x2="326.55" y2="537.1" stroke="#c0c0c0" stroke-width="0.9"/><line x1="326.55" y1="537.1" x2="326.55" y2="539.1" stroke="#8a8a8a" stroke-width="0.9"/><line x1="357.27" y1="173.4" x2="357.27" y2="537.1" stroke="#c0c0c0" stroke-width="0.9"/><line x1="357.27" y1="537.1" x2="357.27" y2="539.1" stroke="#8a8a8a" stroke-width="0.9"/><line x1="388.00" y1="173.4" x2="388.00" y2="537.1" stroke="#c0c0c0" stroke-width="0.9"/><line x1="388.00" y1="537.1" x2="388.00" y2="539.1" stroke="#8a8a8a" stroke-width="0.9"/><line x1="418.73" y1="173.4" x2="418.73" y2="537.1" stroke="#c0c0c0" stroke-width="0.9"/><line x1="418.73" y1="537.1" x2="418.73" y2="539.1" stroke="#8a8a8a" stroke-width="0.9"/><line x1="449.45" y1="173.4" x2="449.45" y2="537.1" stroke="#c0c0c0" stroke-width="0.9"/><line x1="449.45" y1="537.1" x2="449.45" y2="539.1" stroke="#8a8a8a" stroke-width="0.9"/><line x1="480.18" y1="173.4" x2="480.18" y2="537.1" stroke="#c0c0c0" stroke-width="0.9"/><line x1="480.18" y1="537.1" x2="480.18" y2="539.1" stroke="#8a8a8a" stroke-width="0.9"/><line x1="510.90" y1="173.4" x2="510.90" y2="537.1" stroke="#c0c0c0" stroke-width="0.9"/><line x1="510.90" y1="537.1" x2="510.90" y2="539.1" stroke="#8a8a8a" stroke-width="0.9"/><line x1="541.62" y1="173.4" x2="541.62" y2="537.1" stroke="#c0c0c0" stroke-width="0.9"/><line x1="541.62" y1="537.1" x2="541.62" y2="539.1" stroke="#8a8a8a" stroke-width="0.9"/><line x1="572.35" y1="173.4" x2="572.35" y2="537.1" stroke="#c0c0c0" stroke-width="0.9"/><line x1="572.35" y1="537.1" x2="572.35" y2="539.1" stroke="#8a8a8a" stroke-width="0.9"/><line x1="603.08" y1="173.4" x2="603.08" y2="537.1" stroke="#c0c0c0" stroke-width="0.9"/><line x1="603.08" y1="537.1" x2="603.08" y2="539.1" stroke="#8a8a8a" stroke-width="0.9"/><line x1="633.80" y1="173.4" x2="633.80" y2="537.1" stroke="#c0c0c0" stroke-width="0.9"/><line x1="633.80" y1="537.1" x2="633.80" y2="539.1" stroke="#8a8a8a" stroke-width="0.9"/><line x1="664.53" y1="173.4" x2="664.53" y2="537.1" stroke="#c0c0c0" stroke-width="0.9"/><line x1="664.53" y1="537.1" x2="664.53" y2="539.1" stroke="#8a8a8a" stroke-width="0.9"/><line x1="695.25" y1="173.4" x2="695.25" y2="537.1" stroke="#c0c0c0" stroke-width="0.9"/><line x1="695.25" y1="537.1" x2="695.25" y2="539.1" stroke="#8a8a8a" stroke-width="0.9"/><line x1="725.98" y1="173.4" x2="725.98" y2="537.1" stroke="#c0c0c0" stroke-width="0.9"/><line x1="725.98" y1="537.1" x2="725.98" y2="539.1" stroke="#8a8a8a" stroke-width="0.9"/><line x1="756.70" y1="173.4" x2="756.70" y2="537.1" stroke="#c0c0c0" stroke-width="0.9"/><line x1="756.70" y1="537.1" x2="756.70" y2="539.1" stroke="#8a8a8a" stroke-width="0.9"/><line x1="385.6" y1="173.4" x2="385.6" y2="537.1" stroke="#6e6e6e" stroke-width="1"/><line x1="388.6" y1="173.4" x2="388.6" y2="537.1" stroke="#383838" stroke-width="1.3"/><rect x="49.75" y="173.4" width="711.15" height="363.70000000000005" fill="none" stroke="#8e8e8e" stroke-width="1"/><path d="M49.75 507.40 L107.60 507.40" fill="none" stroke="#709ff7" stroke-width="1.4" stroke-dasharray="4.7 1.0 4.7 6.3" stroke-dashoffset="0"/><path d="M107.60 507.40 L139.90 194.50" fill="none" stroke="#709ff7" stroke-width="1.4" stroke-dasharray="5 6.3" stroke-dashoffset="0"/><path d="M139.90 194.50 L695.60 194.50" fill="none" stroke="#709ff7" stroke-width="1.4" stroke-dasharray="4.7 1.0 4.7 6.3" stroke-dashoffset="7.5"/><path d="M695.60 194.50 L728.60 507.40" fill="none" stroke="#709ff7" stroke-width="1.4" stroke-dasharray="5 6.3" stroke-dashoffset="0"/><path d="M104.60 507.40 L107.60 507.40 L107.90 504.90" fill="none" stroke="#709ff7" stroke-width="1.4"/><path d="M139.60 197.00 L139.90 194.50 L141.90 194.50" fill="none" stroke="#709ff7" stroke-width="1.4"/><path d="M728.30 504.90 L728.60 507.40 L729.80 507.40" fill="none" stroke="#709ff7" stroke-width="1.4"/></svg>
<div style="position:absolute;left:735px;top:0;width:26.200000000000045px;height:554px;overflow:hidden"><div style="position:absolute;top:505.00px;white-space:pre;font-family:'Liberation Mono', monospace;font-size:8px;line-height:9.60px;color:#6294f2;font-weight:bold;letter-spacing:0.7px;-webkit-text-stroke:0.25px #6294f2;left:0.60px;width:46.02px;transform-origin:0 0;transform:scaleX(1.0000);">20180921</div></div>
<div style="position:absolute;top:520.00px;white-space:pre;font-family:'Liberation Sans', sans-serif;font-size:7.6px;line-height:9.12px;color:#222;letter-spacing:1.05px;-webkit-text-stroke:0.15px #222;left:17.51px;width:29.84px;transform-origin:0 0;transform:scaleX(1.0000);">-4,750</div>
<div style="position:absolute;top:505.00px;white-space:pre;font-family:'Liberation Sans', sans-serif;font-size:7.6px;line-height:9.12px;color:#222;letter-spacing:1.05px;-webkit-text-stroke:0.15px #222;left:17.51px;width:29.84px;transform-origin:0 0;transform:scaleX(1.0000);">-4,500</div>
<div style="position:absolute;top:489.00px;white-space:pre;font-family:'Liberation Sans', sans-serif;font-size:7.6px;line-height:9.12px;color:#222;letter-spacing:1.05px;-webkit-text-stroke:0.15px #222;left:17.51px;width:29.84px;transform-origin:0 0;transform:scaleX(1.0000);">-4,250</div>
<div style="position:absolute;top:473.00px;white-space:pre;font-family:'Liberation Sans', sans-serif;font-size:7.6px;line-height:9.12px;color:#222;letter-spacing:1.05px;-webkit-text-stroke:0.15px #222;left:17.51px;width:29.84px;transform-origin:0 0;transform:scaleX(1.0000);">-4,000</div>
<div style="position:absolute;top:458.00px;white-space:pre;font-family:'Liberation Sans', sans-serif;font-size:7.6px;line-height:9.12px;color:#222;letter-spacing:1.05px;-webkit-text-stroke:0.15px #222;left:17.51px;width:29.84px;transform-origin:0 0;transform:scaleX(1.0000);">-3,750</div>
<div style="position:absolute;top:442.00px;white-space:pre;font-family:'Liberation Sans', sans-serif;font-size:7.6px;line-height:9.12px;color:#222;letter-spacing:1.05px;-webkit-text-stroke:0.15px #222;left:17.51px;width:29.84px;transform-origin:0 0;transform:scaleX(1.0000);">-3,500</div>
<div style="position:absolute;top:426.00px;white-space:pre;font-family:'Liberation Sans', sans-serif;font-size:7.6px;line-height:9.12px;color:#222;letter-spacing:1.05px;-webkit-text-stroke:0.15px #222;left:17.51px;width:29.84px;transform-origin:0 0;transform:scaleX(1.0000);">-3,250</div>
<div style="position:absolute;top:411.00px;white-space:pre;font-family:'Liberation Sans', sans-serif;font-size:7.6px;line-height:9.12px;color:#222;letter-spacing:1.05px;-webkit-text-stroke:0.15px #222;left:17.51px;width:29.84px;transform-origin:0 0;transform:scaleX(1.0000);">-3,000</div>
<div style="position:absolute;top:395.00px;white-space:pre;font-family:'Liberation Sans', sans-serif;font-size:7.6px;line-height:9.12px;color:#222;letter-spacing:1.05px;-webkit-text-stroke:0.15px #222;left:17.51px;width:29.84px;transform-origin:0 0;transform:scaleX(1.0000);">-2,750</div>
<div style="position:absolute;top:379.00px;white-space:pre;font-family:'Liberation Sans', sans-serif;font-size:7.6px;line-height:9.12px;color:#222;letter-spacing:1.05px;-webkit-text-stroke:0.15px #222;left:17.51px;width:29.84px;transform-origin:0 0;transform:scaleX(1.0000);">-2,500</div>
<div style="position:absolute;top:364.00px;white-space:pre;font-family:'Liberation Sans', sans-serif;font-size:7.6px;line-height:9.12px;color:#222;letter-spacing:1.05px;-webkit-text-stroke:0.15px #222;left:17.51px;width:29.84px;transform-origin:0 0;transform:scaleX(1.0000);">-2,250</div>
<div style="position:absolute;top:348.00px;white-space:pre;font-family:'Liberation Sans', sans-serif;font-size:7.6px;line-height:9.12px;color:#222;letter-spacing:1.05px;-webkit-text-stroke:0.15px #222;left:17.51px;width:29.84px;transform-origin:0 0;transform:scaleX(1.0000);">-2,000</div>
<div style="position:absolute;top:333.00px;white-space:pre;font-family:'Liberation Sans', sans-serif;font-size:7.6px;line-height:9.12px;color:#222;letter-spacing:1.05px;-webkit-text-stroke:0.15px #222;left:17.51px;width:29.84px;transform-origin:0 0;transform:scaleX(1.0000);">-1,750</div>
<div style="position:absolute;top:317.00px;white-space:pre;font-family:'Liberation Sans', sans-serif;font-size:7.6px;line-height:9.12px;color:#222;letter-spacing:1.05px;-webkit-text-stroke:0.15px #222;left:17.51px;width:29.84px;transform-origin:0 0;transform:scaleX(1.0000);">-1,500</div>
<div style="position:absolute;top:301.00px;white-space:pre;font-family:'Liberation Sans', sans-serif;font-size:7.6px;line-height:9.12px;color:#222;letter-spacing:1.05px;-webkit-text-stroke:0.15px #222;left:17.51px;width:29.84px;transform-origin:0 0;transform:scaleX(1.0000);">-1,250</div>
<div style="position:absolute;top:286.00px;white-space:pre;font-family:'Liberation Sans', sans-serif;font-size:7.6px;line-height:9.12px;color:#222;letter-spacing:1.05px;-webkit-text-stroke:0.15px #222;left:17.51px;width:29.84px;transform-origin:0 0;transform:scaleX(1.0000);">-1,000</div>
<div style="position:absolute;top:270.00px;white-space:pre;font-family:'Liberation Sans', sans-serif;font-size:7.6px;line-height:9.12px;color:#222;letter-spacing:1.05px;-webkit-text-stroke:0.15px #222;left:25.94px;width:21.41px;transform-origin:0 0;transform:scaleX(1.0000);">-750</div>
<div style="position:absolute;top:254.00px;white-space:pre;font-family:'Liberation Sans', sans-serif;font-size:7.6px;line-height:9.12px;color:#222;letter-spacing:1.05px;-webkit-text-stroke:0.15px #222;left:25.94px;width:21.41px;transform-origin:0 0;transform:scaleX(1.0000);">-500</div>
<div style="position:absolute;top:239.00px;white-space:pre;font-family:'Liberation Sans', sans-serif;font-size:7.6px;line-height:9.12px;color:#222;letter-spacing:1.05px;-webkit-text-stroke:0.15px #222;left:25.94px;width:21.41px;transform-origin:0 0;transform:scaleX(1.0000);">-250</div>
<div style="position:absolute;top:223.00px;white-space:pre;font-family:'Liberation Sans', sans-serif;font-size:7.6px;line-height:9.12px;color:#222;letter-spacing:1.05px;-webkit-text-stroke:0.15px #222;left:40.07px;width:7.28px;transform-origin:0 0;transform:scaleX(1.0000);">0</div>
<div style="position:absolute;top:207.00px;white-space:pre;font-family:'Liberation Sans', sans-serif;font-size:7.6px;line-height:9.12px;color:#222;letter-spacing:1.05px;-webkit-text-stroke:0.15px #222;left:29.52px;width:17.83px;transform-origin:0 0;transform:scaleX(1.0000);">250</div>
<div style="position:absolute;top:192.00px;white-space:pre;font-family:'Liberation Sans', sans-serif;font-size:7.6px;line-height:9.12px;color:#222;letter-spacing:1.05px;-webkit-text-stroke:0.15px #222;left:29.52px;width:17.83px;transform-origin:0 0;transform:scaleX(1.0000);">500</div>
<div style="position:absolute;top:176.00px;white-space:pre;font-family:'Liberation Sans', sans-serif;font-size:7.6px;line-height:9.12px;color:#222;letter-spacing:1.05px;-webkit-text-stroke:0.15px #222;left:29.52px;width:17.83px;transform-origin:0 0;transform:scaleX(1.0000);">750</div>
<div style="position:absolute;top:541.00px;white-space:pre;font-family:'Liberation Sans', sans-serif;font-size:7.6px;line-height:9.12px;color:#222;letter-spacing:1.0px;-webkit-text-stroke:0.15px #222;left:39.87px;width:24.31px;transform-origin:0 0;transform:scaleX(1.0000);">-27.5</div>
<div style="position:absolute;top:541.00px;white-space:pre;font-family:'Liberation Sans', sans-serif;font-size:7.6px;line-height:9.12px;color:#222;letter-spacing:1.0px;-webkit-text-stroke:0.15px #222;left:70.59px;width:24.31px;transform-origin:0 0;transform:scaleX(1.0000);">-25.0</div>
<div style="position:absolute;top:541.00px;white-space:pre;font-family:'Liberation Sans', sans-serif;font-size:7.6px;line-height:9.12px;color:#222;letter-spacing:1.0px;-webkit-text-stroke:0.15px #222;left:101.32px;width:24.31px;transform-origin:0 0;transform:scaleX(1.0000);">-22.5</div>
<div style="position:absolute;top:541.00px;white-space:pre;font-family:'Liberation Sans', sans-serif;font-size:7.6px;line-height:9.12px;color:#222;letter-spacing:1.0px;-webkit-text-stroke:0.15px #222;left:132.04px;width:24.31px;transform-origin:0 0;transform:scaleX(1.0000);">-20.0</div>
<div style="position:absolute;top:541.00px;white-space:pre;font-family:'Liberation Sans', sans-serif;font-size:7.6px;line-height:9.12px;color:#222;letter-spacing:1.0px;-webkit-text-stroke:0.15px #222;left:162.77px;width:24.31px;transform-origin:0 0;transform:scaleX(1.0000);">-17.5</div>
<div style="position:absolute;top:541.00px;white-space:pre;font-family:'Liberation Sans', sans-serif;font-size:7.6px;line-height:9.12px;color:#222;letter-spacing:1.0px;-webkit-text-stroke:0.15px #222;left:193.49px;width:24.31px;transform-origin:0 0;transform:scaleX(1.0000);">-15.0</div>
<div style="position:absolute;top:541.00px;white-space:pre;font-family:'Liberation Sans', sans-serif;font-size:7.6px;line-height:9.12px;color:#222;letter-spacing:1.0px;-webkit-text-stroke:0.15px #222;left:224.22px;width:24.31px;transform-origin:0 0;transform:scaleX(1.0000);">-12.5</div>
<div style="position:absolute;top:541.00px;white-space:pre;font-family:'Liberation Sans', sans-serif;font-size:7.6px;line-height:9.12px;color:#222;letter-spacing:1.0px;-webkit-text-stroke:0.15px #222;left:254.94px;width:24.31px;transform-origin:0 0;transform:scaleX(1.0000);">-10.0</div>
<div style="position:absolute;top:541.00px;white-space:pre;font-family:'Liberation Sans', sans-serif;font-size:7.6px;line-height:9.12px;color:#222;letter-spacing:1.0px;-webkit-text-stroke:0.15px #222;left:288.28px;width:19.09px;transform-origin:0 0;transform:scaleX(1.0000);">-7.5</div>
<div style="position:absolute;top:541.00px;white-space:pre;font-family:'Liberation Sans', sans-serif;font-size:7.6px;line-height:9.12px;color:#222;letter-spacing:1.0px;-webkit-text-stroke:0.15px #222;left:319.00px;width:19.09px;transform-origin:0 0;transform:scaleX(1.0000);">-5.0</div>
<div style="position:absolute;top:541.00px;white-space:pre;font-family:'Liberation Sans', sans-serif;font-size:7.6px;line-height:9.12px;color:#222;letter-spacing:1.0px;-webkit-text-stroke:0.15px #222;left:349.73px;width:19.09px;transform-origin:0 0;transform:scaleX(1.0000);">-2.5</div>
<div style="position:absolute;top:541.00px;white-space:pre;font-family:'Liberation Sans', sans-serif;font-size:7.6px;line-height:9.12px;color:#222;letter-spacing:1.0px;-webkit-text-stroke:0.15px #222;left:382.22px;width:15.56px;transform-origin:0 0;transform:scaleX(1.0000);">0.0</div>
<div style="position:absolute;top:541.00px;white-space:pre;font-family:'Liberation Sans', sans-serif;font-size:7.6px;line-height:9.12px;color:#222;letter-spacing:1.0px;-webkit-text-stroke:0.15px #222;left:412.94px;width:15.56px;transform-origin:0 0;transform:scaleX(1.0000);">2.5</div>
<div style="position:absolute;top:541.00px;white-space:pre;font-family:'Liberation Sans', sans-serif;font-size:7.6px;line-height:9.12px;color:#222;letter-spacing:1.0px;-webkit-text-stroke:0.15px #222;left:443.67px;width:15.56px;transform-origin:0 0;transform:scaleX(1.0000);">5.0</div>
<div style="position:absolute;top:541.00px;white-space:pre;font-family:'Liberation Sans', sans-serif;font-size:7.6px;line-height:9.12px;color:#222;letter-spacing:1.0px;-webkit-text-stroke:0.15px #222;left:474.39px;width:15.56px;transform-origin:0 0;transform:scaleX(1.0000);">7.5</div>
<div style="position:absolute;top:541.00px;white-space:pre;font-family:'Liberation Sans', sans-serif;font-size:7.6px;line-height:9.12px;color:#222;letter-spacing:1.0px;-webkit-text-stroke:0.15px #222;left:502.51px;width:20.78px;transform-origin:0 0;transform:scaleX(1.0000);">10.0</div>
<div style="position:absolute;top:541.00px;white-space:pre;font-family:'Liberation Sans', sans-serif;font-size:7.6px;line-height:9.12px;color:#222;letter-spacing:1.0px;-webkit-text-stroke:0.15px #222;left:533.23px;width:20.78px;transform-origin:0 0;transform:scaleX(1.0000);">12.5</div>
<div style="position:absolute;top:541.00px;white-space:pre;font-family:'Liberation Sans', sans-serif;font-size:7.6px;line-height:9.12px;color:#222;letter-spacing:1.0px;-webkit-text-stroke:0.15px #222;left:563.96px;width:20.78px;transform-origin:0 0;transform:scaleX(1.0000);">15.0</div>
<div style="position:absolute;top:541.00px;white-space:pre;font-family:'Liberation Sans', sans-serif;font-size:7.6px;line-height:9.12px;color:#222;letter-spacing:1.0px;-webkit-text-stroke:0.15px #222;left:594.68px;width:20.78px;transform-origin:0 0;transform:scaleX(1.0000);">17.5</div>
<div style="position:absolute;top:541.00px;white-space:pre;font-family:'Liberation Sans', sans-serif;font-size:7.6px;line-height:9.12px;color:#222;letter-spacing:1.0px;-webkit-text-stroke:0.15px #222;left:625.41px;width:20.78px;transform-origin:0 0;transform:scaleX(1.0000);">20.0</div>
<div style="position:absolute;top:541.00px;white-space:pre;font-family:'Liberation Sans', sans-serif;font-size:7.6px;line-height:9.12px;color:#222;letter-spacing:1.0px;-webkit-text-stroke:0.15px #222;left:656.13px;width:20.78px;transform-origin:0 0;transform:scaleX(1.0000);">22.5</div>
<div style="position:absolute;top:541.00px;white-space:pre;font-family:'Liberation Sans', sans-serif;font-size:7.6px;line-height:9.12px;color:#222;letter-spacing:1.0px;-webkit-text-stroke:0.15px #222;left:686.86px;width:20.78px;transform-origin:0 0;transform:scaleX(1.0000);">25.0</div>
<div style="position:absolute;top:541.00px;white-space:pre;font-family:'Liberation Sans', sans-serif;font-size:7.6px;line-height:9.12px;color:#222;letter-spacing:1.0px;-webkit-text-stroke:0.15px #222;left:717.58px;width:20.78px;transform-origin:0 0;transform:scaleX(1.0000);">27.5</div>
<div style="position:absolute;top:541.00px;white-space:pre;font-family:'Liberation Sans', sans-serif;font-size:7.6px;line-height:9.12px;color:#222;letter-spacing:1.0px;-webkit-text-stroke:0.15px #222;left:748.31px;width:20.78px;transform-origin:0 0;transform:scaleX(1.0000);">30.0</div>
<div style="position:absolute;left:-72.56px;top:356.54px;width:155.26px;height:9.12px;font-family:'Liberation Sans', sans-serif;font-size:7.6px;line-height:9.12px;white-space:pre;color:#222;-webkit-text-stroke:0.15px #222;letter-spacing:0.758px;text-indent:0.758px;text-align:center;transform-origin:50% 50%;transform:rotate(-90deg)">Equity Portfolio Value Change (USD)</div>
</body></html>
